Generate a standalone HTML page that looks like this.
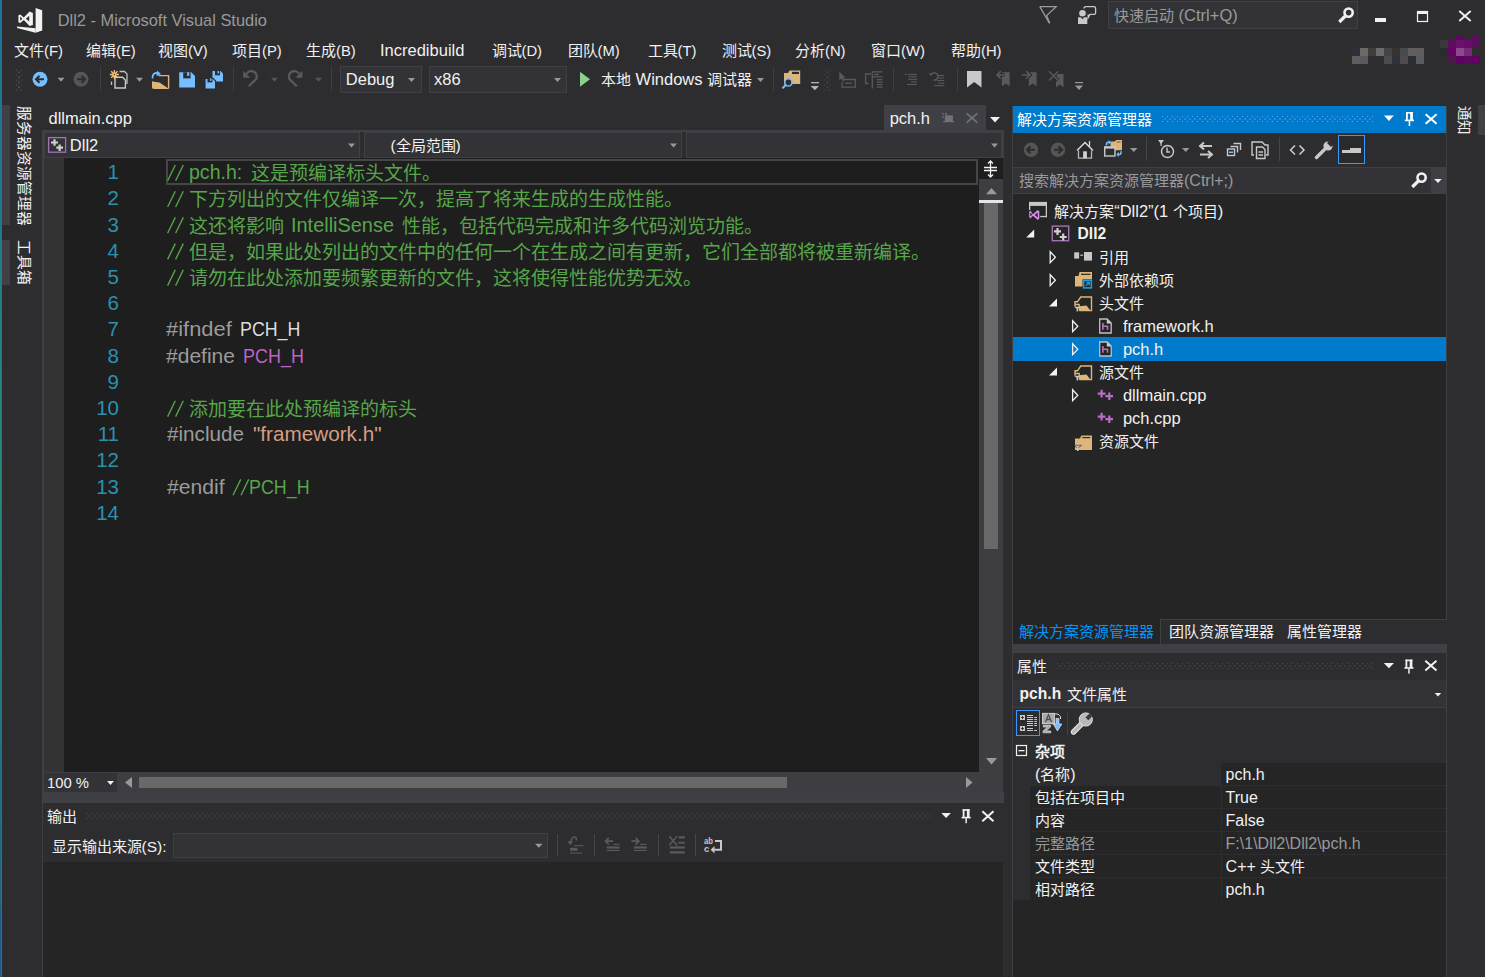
<!DOCTYPE html>
<html lang="zh-CN"><head><meta charset="utf-8"><title>Dll2 - Microsoft Visual Studio</title>
<style>
html,body{margin:0;padding:0;width:1485px;height:977px;overflow:hidden;background:#2d2d30;}
body{position:relative;font-family:"Liberation Sans",sans-serif;}
svg{position:absolute;left:0;top:0;}
.t{position:absolute;white-space:pre;line-height:0;}
.t span{line-height:0;}
</style></head><body>
<svg width="1485" height="977" viewBox="0 0 1485 977">
<defs><linearGradient id="desk" x1="0" y1="0" x2="0" y2="1"><stop offset="0" stop-color="#1f6f9a"/><stop offset="0.5" stop-color="#2a8a7a"/><stop offset="1" stop-color="#1a5a8a"/></linearGradient></defs>
<g shape-rendering="crispEdges">
<rect x="0" y="0" width="1485" height="977" fill="#2d2d30" />
<rect x="0" y="0" width="1" height="977" fill="url(#desk)"/>
<rect x="1" y="0" width="1" height="977" fill="#007acc" />
<rect x="1108" y="1" width="250" height="28" fill="#3f3f46" />
<rect x="1109" y="2" width="248" height="26" fill="#333337" />
<rect x="1375" y="18" width="11" height="4" fill="#f1f1f1" />
<rect x="1352" y="48" width="8" height="8" fill="#2d3038" />
<rect x="1360" y="48" width="8" height="8" fill="#6e6866" />
<rect x="1368" y="48" width="8" height="8" fill="#3f3e3e" />
<rect x="1376" y="48" width="8" height="8" fill="#6c6c6e" />
<rect x="1384" y="48" width="8" height="8" fill="#444343" />
<rect x="1392" y="48" width="8" height="8" fill="#383434" />
<rect x="1400" y="48" width="8" height="8" fill="#4a4b4f" />
<rect x="1408" y="48" width="8" height="8" fill="#625e5f" />
<rect x="1416" y="48" width="8" height="8" fill="#5f5e5c" />
<rect x="1352" y="56" width="8" height="8" fill="#5e5e60" />
<rect x="1360" y="56" width="8" height="8" fill="#5a5a5c" />
<rect x="1384" y="56" width="8" height="8" fill="#4b4c50" />
<rect x="1392" y="56" width="8" height="8" fill="#2e3138" />
<rect x="1400" y="56" width="8" height="8" fill="#4d4d4f" />
<rect x="1416" y="56" width="8" height="8" fill="#595c61" />
<rect x="1432" y="48" width="8" height="8" fill="#2e2e2e" />
<rect x="1440" y="48" width="8" height="8" fill="#2b2b2d" />
<rect x="1440" y="40" width="8" height="8" fill="#383838" />
<rect x="1448" y="40" width="8" height="8" fill="#5c0c5c" />
<rect x="1456" y="40" width="8" height="8" fill="#6a1070" />
<rect x="1464" y="40" width="8" height="8" fill="#680a68" />
<rect x="1472" y="40" width="8" height="8" fill="#58105a" />
<rect x="1448" y="48" width="8" height="8" fill="#660066" />
<rect x="1456" y="48" width="8" height="8" fill="#8c4a8c" />
<rect x="1464" y="48" width="8" height="8" fill="#7a2a7a" />
<rect x="1448" y="56" width="8" height="8" fill="#4a1a4a" />
<rect x="1456" y="56" width="8" height="8" fill="#600060" />
<rect x="1464" y="56" width="8" height="8" fill="#5a0a5a" />
<rect x="1472" y="56" width="8" height="8" fill="#640064" />
<rect x="1456" y="35" width="8" height="5" fill="#5a0a5a" />
<rect x="1472" y="35" width="8" height="5" fill="#5c0c5c" />
<rect x="100" y="67" width="1" height="24" fill="#3f3f46" />
<rect x="233" y="67" width="1" height="24" fill="#3f3f46" />
<rect x="331" y="67" width="1" height="24" fill="#3f3f46" />
<rect x="340" y="66" width="82" height="27" fill="#3f3f46" />
<rect x="341" y="67" width="80" height="25" fill="#333337" />
<rect x="429" y="66" width="138" height="27" fill="#3f3f46" />
<rect x="430" y="67" width="136" height="25" fill="#333337" />
<rect x="773" y="67" width="1" height="24" fill="#3f3f46" />
<rect x="893" y="67" width="1" height="24" fill="#3f3f46" />
<rect x="957" y="67" width="1" height="24" fill="#3f3f46" />
<rect x="2" y="105" width="8" height="120" fill="#3f3f46" />
<rect x="2" y="240" width="8" height="45" fill="#3f3f46" />
<rect x="884" y="105" width="102" height="25" fill="#3f3f46" />
<rect x="42" y="130" width="962" height="2" fill="#3f3f46" />
<rect x="42" y="130" width="2" height="673" fill="#3f3f46" />
<rect x="1002" y="130" width="2" height="28" fill="#3f3f46" />
<rect x="44" y="132" width="316" height="26" fill="#3f3f46" />
<rect x="45" y="133" width="314" height="24" fill="#333337" />
<rect x="364" y="132" width="318" height="26" fill="#3f3f46" />
<rect x="365" y="133" width="316" height="24" fill="#333337" />
<rect x="686" y="132" width="316" height="26" fill="#3f3f46" />
<rect x="687" y="133" width="314" height="24" fill="#333337" />
<rect x="44" y="158" width="20" height="614" fill="#333333" />
<rect x="64" y="158" width="915" height="614" fill="#1e1e1e" />
<rect x="167" y="160" width="810" height="24" fill="none" stroke="#464646" stroke-width="2"/>
<rect x="979" y="158" width="24" height="21" fill="#1e1e1e" />
<rect x="979" y="179" width="24" height="593" fill="#3e3e42" />
<rect x="979" y="200" width="24" height="3" fill="#e6e6e6" />
<rect x="984" y="203" width="14" height="346" fill="#686868" />
<rect x="44" y="772" width="959" height="20" fill="#3e3e42" />
<rect x="44" y="773" width="73" height="19" fill="#333337" />
<rect x="139" y="777" width="648" height="11" fill="#686868" />
<rect x="42" y="792" width="962" height="11" fill="#3f3f46" />
<rect x="43" y="803" width="960" height="59" fill="#2d2d30" />
<rect x="43" y="862" width="960" height="115" fill="#252526" />
<rect x="173" y="833" width="375" height="25" fill="#3f3f46" />
<rect x="174" y="834" width="373" height="23" fill="#333337" />
<rect x="557" y="834" width="1" height="22" fill="#46464a" />
<rect x="594" y="834" width="1" height="22" fill="#46464a" />
<rect x="658" y="834" width="1" height="22" fill="#46464a" />
<rect x="695" y="834" width="1" height="22" fill="#46464a" />
<rect x="1012" y="106" width="1" height="513" fill="#3f3f46" />
<rect x="1446" y="106" width="1" height="514" fill="#3f3f46" />
<rect x="1013" y="106" width="433" height="27" fill="#007acc" />
<rect x="1013" y="133" width="433" height="34" fill="#2d2d30" />
<rect x="1146" y="137" width="1" height="24" fill="#46464a" />
<rect x="1279" y="137" width="1" height="24" fill="#46464a" />
<rect x="1338.5" y="135.5" width="26" height="28" fill="#2a2a2d" stroke="#3399ff" stroke-width="1"/>
<rect x="1342" y="150" width="18" height="2.5" fill="#c8c8c8" />
<rect x="1350" y="147.5" width="10.5" height="5.3" fill="#c8c8c8" />
<rect x="1013" y="167" width="433" height="26" fill="#333337" />
<rect x="1013" y="167" width="433" height="1" fill="#3f3f46" />
<rect x="1013" y="193" width="433" height="1" fill="#3f3f46" />
<rect x="1431" y="167" width="15" height="26" fill="#3f3f46" />
<rect x="1013" y="194" width="433" height="425" fill="#252526" />
<rect x="1013" y="337" width="433" height="24" fill="#007acc" />
<rect x="1013" y="619" width="147" height="25" fill="#252526" />
<rect x="1160" y="619" width="287" height="1" fill="#3f3f46" />
<rect x="1160" y="619" width="1" height="25" fill="#3f3f46" />
<rect x="1012" y="644" width="435" height="9" fill="#3f3f46" />
<rect x="1012" y="619" width="1" height="25" fill="#3f3f46" />
<rect x="42" y="803" width="1" height="174" fill="#3f3f46" />
<rect x="1012" y="653" width="1" height="324" fill="#3f3f46" />
<rect x="1446" y="653" width="1" height="324" fill="#3f3f46" />
<rect x="1013" y="680" width="433" height="28" fill="#333337" />
<rect x="1013" y="707" width="433" height="1" fill="#3f3f46" />
<rect x="1016.5" y="710.5" width="23" height="25" fill="#2d2d30" stroke="#3399ff" stroke-width="1.2"/>
<rect x="1067" y="712" width="1" height="23" fill="#3f3f46" />
<rect x="1221" y="763" width="225" height="22" fill="#252526" />
<rect x="1030" y="786" width="191" height="22" fill="#252526" />
<rect x="1222" y="786" width="224" height="22" fill="#252526" />
<rect x="1030" y="809" width="191" height="22" fill="#252526" />
<rect x="1222" y="809" width="224" height="22" fill="#252526" />
<rect x="1030" y="832" width="191" height="22" fill="#252526" />
<rect x="1222" y="832" width="224" height="22" fill="#252526" />
<rect x="1030" y="855" width="191" height="22" fill="#252526" />
<rect x="1222" y="855" width="224" height="22" fill="#252526" />
<rect x="1030" y="878" width="191" height="22" fill="#252526" />
<rect x="1222" y="878" width="224" height="22" fill="#252526" />
<rect x="1013" y="900" width="433" height="77" fill="#252526" />
<rect x="1478" y="105" width="7" height="30" fill="#3f3f46" />
</g>
<g transform="translate(14,4)" fill="#f1f1f1"><path d="M21.6 3.9 L28.2 6.2 L28.2 26.5 L21.6 28.8 Z"/><path d="M3 22.4 L21.6 24.2 L21.6 28.8 L3 24 Z"/><path fill-rule="evenodd" d="M4.4 11.2 L6.2 10.6 L9.8 13.6 L15.6 7.6 L18.9 8.9 L18.9 20.9 L15.6 22 L9.8 16 L6.2 18.9 L4.4 18.3 Z M6.2 12.6 L6.2 16.8 L8.4 14.7 Z M15.2 11.8 L15.2 17.6 L11.9 14.8 Z"/></g>
<g fill="none" stroke="#9a9a9a" stroke-width="1.3"><path d="M1039.8 6.6 L1056.2 6.6 L1046.6 15.6 L1049.8 23.3"/><path d="M1039.8 6.6 L1049.4 23.3" /></g>
<g fill="#c8c8c8"><circle cx="1082.5" cy="13.2" r="3.3"/><path d="M1078 24 L1078 17.2 L1080.8 17.2 L1082.5 19.2 L1084.2 17.2 L1087.3 17.2 L1087.3 24 Z"/></g><path d="M1084 8.5 Q1084 6.7 1086 6.7 L1094 6.7 Q1095.6 6.7 1095.6 8.5 L1095.6 12.8 Q1095.6 14.4 1094 14.4 L1090 14.4 L1088.2 17.5 L1088.2 14.4" fill="none" stroke="#c8c8c8" stroke-width="1.3"/>
<g stroke="#f1f1f1" fill="none"><circle cx="1348.6" cy="12.6" r="4.1" stroke-width="2.6"/><path d="M1345.3 16 L1339.3 22" stroke-width="3.2"/></g>
<rect x="1417.5" y="11.5" width="10" height="10" fill="none" stroke="#f1f1f1" stroke-width="1.2"/><rect x="1417" y="11" width="11" height="3" fill="#f1f1f1"/>
<path d="M1459.3 11 L1470.7 21 M1470.7 11 L1459.3 21" stroke="#f1f1f1" stroke-width="1.9"/>
<rect x="16" y="69.5" width="1.2" height="1.2" fill="#505054"/><rect x="21" y="69.5" width="1.2" height="1.2" fill="#505054"/><rect x="18.2" y="71.5" width="1.8" height="1.8" fill="#505054"/><rect x="16" y="74.5" width="1.2" height="1.2" fill="#505054"/><rect x="21" y="74.5" width="1.2" height="1.2" fill="#505054"/><rect x="18.2" y="76.5" width="1.8" height="1.8" fill="#505054"/><rect x="16" y="79.5" width="1.2" height="1.2" fill="#505054"/><rect x="21" y="79.5" width="1.2" height="1.2" fill="#505054"/><rect x="18.2" y="81.5" width="1.8" height="1.8" fill="#505054"/><rect x="16" y="84.5" width="1.2" height="1.2" fill="#505054"/><rect x="21" y="84.5" width="1.2" height="1.2" fill="#505054"/><rect x="18.2" y="86.5" width="1.8" height="1.8" fill="#505054"/><rect x="16" y="89.5" width="1.2" height="1.2" fill="#505054"/><rect x="21" y="89.5" width="1.2" height="1.2" fill="#505054"/>
<circle cx="40" cy="79.2" r="7.5" fill="#75beff"/><path d="M36 79.2 L44 79.2 M39.5 75.7 L36 79.2 L39.5 82.7" stroke="#2d2d30" stroke-width="2" fill="none"/>
<path d="M57.5 77.7 L64.5 77.7 L61.0 81.7 Z" fill="#999999"/>
<circle cx="81" cy="79.2" r="7.5" fill="#555555"/><path d="M85 79.2 L77 79.2 M81.5 75.7 L85 79.2 L81.5 82.7" stroke="#2d2d30" stroke-width="2" fill="none"/>
<path d="M119.5 71.5 L124.5 71.5 L127 74 L127 84" fill="none" stroke="#c0c0c0" stroke-width="1.3"/><path d="M111.5 81.5 L111.5 85" fill="none" stroke="#c0c0c0" stroke-width="1.3"/><path d="M115 77.2 L122.5 77.2 L125.4 80.1 L125.4 88 L115 88 Z" fill="#2d2d30" stroke="#c8c8c8" stroke-width="1.4"/><g stroke="#f2c27e" stroke-width="1.3"><path d="M114.4 70 L114.4 79 M109.9 74.5 L118.9 74.5 M111.2 71.3 L117.6 77.7 M117.6 71.3 L111.2 77.7"/></g><circle cx="114.4" cy="74.5" r="1.6" fill="#f2c27e"/><circle cx="114.4" cy="74.5" r="0.7" fill="#2d2d30"/>
<path d="M136 77.7 L143 77.7 L139.5 81.7 Z" fill="#999999"/>
<path d="M158.5 75.6 L168.6 75.6 L168.6 88.4" fill="none" stroke="#dcb67a" stroke-width="1.4"/><path d="M152 81.5 L159.5 82.5 L169.2 89 L153.4 89 Z" fill="#dcb67a"/><path d="M152.6 81.5 L152.6 88.5" stroke="#dcb67a" stroke-width="1.2"/><path d="M152.5 78.5 C152 74 155 72.3 158.5 73.2" fill="none" stroke="#75beff" stroke-width="1.8"/><path d="M157 70.5 L161 74 L156.5 76" fill="#75beff"/>
<path d="M179.2 72.3 L191.3 72.3 L195 76 L195 87.6 L179.2 87.6 Z" fill="#75beff"/><rect x="183.2" y="72.3" width="7.4" height="6.1" fill="#2d2d30"/><rect x="187.1" y="72.3" width="2.2" height="3.5" fill="#75beff"/>
<path d="M212.5 71 L220.5 71 L223 73.5 L223 81.5 L212.5 81.5 Z" fill="#75beff"/><rect x="215" y="71" width="5" height="4.3" fill="#2d2d30"/><rect x="217.5" y="71" width="1.5" height="2.5" fill="#75beff"/><path d="M205 78.4 L213 78.4 L215.6 81 L215.6 89 L205 89 Z" fill="#75beff" stroke="#2d2d30" stroke-width="1.2"/><rect x="207.5" y="78.4" width="5" height="4" fill="#2d2d30"/><rect x="210" y="78.4" width="1.5" height="2.4" fill="#75beff"/>
<path d="M248.8 86.3 L256 79.3 A5.2 5.2 0 0 0 246.5 73.8" fill="none" stroke="#5a5a5a" stroke-width="2.3"/><path d="M243.2 70.8 L243.2 77.8 L250.2 77.8 Z" fill="#5a5a5a"/>
<path d="M271 77.7 L278 77.7 L274.5 81.7 Z" fill="#555555"/>
<path d="M296.8 86.3 L289.6 79.3 A5.2 5.2 0 0 1 299.1 73.8" fill="none" stroke="#5a5a5a" stroke-width="2.3"/><path d="M302.4 70.8 L302.4 77.8 L295.4 77.8 Z" fill="#5a5a5a"/>
<path d="M315 77.7 L322 77.7 L318.5 81.7 Z" fill="#555555"/>
<path d="M408 78 L415 78 L411.5 82 Z" fill="#999999"/>
<path d="M554 78 L561 78 L557.5 82 Z" fill="#999999"/>
<path d="M580 71.7 L590 79.2 L580 86.7 Z" fill="#8ad28a"/>
<path d="M757 78 L764 78 L760.5 82 Z" fill="#999999"/>
<path d="M784 73 L788 73 L789.5 70.6 L800.2 70.6 L800.2 84.1 L784 84.1 Z" fill="#dcb67a"/><rect x="792" y="71.8" width="7" height="2.2" fill="#2d2d30"/><circle cx="788.4" cy="82.4" r="3.6" fill="#2d2d30" stroke="#75beff" stroke-width="1.6"/><path d="M785.8 85 L783 87.8" stroke="#75beff" stroke-width="2" stroke-linecap="round"/>
<rect x="811" y="82" width="8" height="1.3" fill="#b4b4b4"/><path d="M810.7 86 L819 86 L814.85 90.3 Z" fill="#b4b4b4"/>
<rect x="824.2" y="69.5" width="1.2" height="1.2" fill="#46464a"/><rect x="829.2" y="69.5" width="1.2" height="1.2" fill="#46464a"/><rect x="826.4000000000001" y="71.5" width="1.8" height="1.8" fill="#46464a"/><rect x="824.2" y="74.5" width="1.2" height="1.2" fill="#46464a"/><rect x="829.2" y="74.5" width="1.2" height="1.2" fill="#46464a"/><rect x="826.4000000000001" y="76.5" width="1.8" height="1.8" fill="#46464a"/><rect x="824.2" y="79.5" width="1.2" height="1.2" fill="#46464a"/><rect x="829.2" y="79.5" width="1.2" height="1.2" fill="#46464a"/><rect x="826.4000000000001" y="81.5" width="1.8" height="1.8" fill="#46464a"/><rect x="824.2" y="84.5" width="1.2" height="1.2" fill="#46464a"/><rect x="829.2" y="84.5" width="1.2" height="1.2" fill="#46464a"/><rect x="826.4000000000001" y="86.5" width="1.8" height="1.8" fill="#46464a"/><rect x="824.2" y="89.5" width="1.2" height="1.2" fill="#46464a"/><rect x="829.2" y="89.5" width="1.2" height="1.2" fill="#46464a"/>
<path d="M839.3 71.4 L839.3 80.6 L841.5 78.6 L843.3 82 L844.5 81.3 L842.8 78 L845.5 78 Z" fill="#595959"/><g fill="none" stroke="#595959" stroke-width="1.3"><path d="M842.5 79.5 L855.3 79.5 L855.3 87.2 L842 87.2 L842 82"/><path d="M845 83.3 L852 83.3"/></g>
<g fill="none" stroke="#595959" stroke-width="1.3"><path d="M868.5 74 L865.6 74 L865.6 83.5 L868.5 83.5 M868 74 L871 74"/><path d="M872.3 71.5 L872.3 88.5 M872.3 71.8 L882.5 71.8 M874.2 74.5 L879 74.5 M872.3 76.8 L882.5 76.8 M876.8 79.6 L882.5 79.6 M876.8 82.1 L882.5 82.1 M876.8 84.6 L882.5 84.6 M876.8 87.1 L882.5 87.1"/></g>
<g fill="#595959"><rect x="904.8" y="73.9" width="2" height="1.1"/><rect x="908.3" y="73.9" width="8.7" height="1.1"/><rect x="908.3" y="76.3" width="8.7" height="1.1"/><rect x="908.3" y="78.8" width="8.7" height="1.1"/><rect x="911.1" y="81.3" width="5.9" height="1.1"/><rect x="907" y="83.9" width="10" height="1.1"/></g>
<path d="M931 75 A3.6 3.6 0 1 1 933.5 80" fill="none" stroke="#595959" stroke-width="1.3"/><path d="M929 73.5 L932.5 73 L931 76.5 Z" fill="#595959"/><g fill="#595959"><rect x="938" y="75" width="6.2" height="1.1"/><rect x="938" y="77.5" width="6.2" height="1.1"/><rect x="937" y="80" width="7.2" height="1.1"/><rect x="938" y="82.6" width="6.2" height="1.1"/><rect x="934.1" y="85.1" width="10.1" height="1.1"/></g>
<path d="M967 71 L981.5 71 L981.5 87.5 L974.25 82 L967 87.5 Z" fill="#c8c8c8"/>
<path d="M1001.9 72.2 L1009.7 72.2 L1009.7 86.2 L1005.8 83.6 L1001.9 86.2 Z" fill="#595959"/><path d="M1004.5 74.9 L997 74.9 M1000.8 71.1 L997 74.9 L1000.8 78.7" stroke="#2d2d30" stroke-width="3.6" fill="none"/><path d="M1004.5 74.9 L997 74.9 M1000.8 71.1 L997 74.9 L1000.8 78.7" stroke="#595959" stroke-width="1.5" fill="none"/>
<path d="M1028.8 72.2 L1036.6 72.2 L1036.6 86.2 L1032.7 83.6 L1028.8 86.2 Z" fill="#595959"/><path d="M1021.5 74.9 L1030 74.9 M1026.2 71.1 L1030 74.9 L1026.2 78.7" stroke="#2d2d30" stroke-width="3.6" fill="none"/><path d="M1021.5 74.9 L1030 74.9 M1026.2 71.1 L1030 74.9 L1026.2 78.7" stroke="#595959" stroke-width="1.5" fill="none"/>
<path d="M1056 74.1 L1063.5 74.1 L1063.5 87.3 L1059.75 84.6 L1056 87.3 Z" fill="#595959"/><path d="M1049 71.3 L1058.2 80.5 M1058.2 71.3 L1049 80.5" stroke="#2d2d30" stroke-width="3.4" fill="none"/><path d="M1049 71.3 L1058.2 80.5 M1058.2 71.3 L1049 80.5" stroke="#595959" stroke-width="1.5" fill="none"/>
<rect x="1075" y="82" width="8" height="1.2" fill="#999"/><path d="M1075 85.5 L1083 85.5 L1079 90 Z" fill="#999"/>
<g fill="#737373"><rect x="944.9" y="115.4" width="8" height="5.8"/><rect x="943.1" y="121.1" width="11" height="1.1"/><rect x="945.2" y="113" width="1.8" height="1.8"/><rect x="942" y="116.3" width="1.8" height="1.4"/></g><path d="M942 112.9 L943.8 114.7" stroke="#737373" stroke-width="1.2"/>
<path d="M966.6 113.3 L977.4 122.7 M977.4 113.3 L966.6 122.7" stroke="#737373" stroke-width="1.7"/>
<path d="M990 117 L1000 117 L995 122.4 Z" fill="#f1f1f1"/>
<rect x="48.6" y="137.6" width="17" height="14.6" fill="none" stroke="#a472b4" stroke-width="1.3"/><path d="M51 142.5 L58 142.5 M54.5 139.2 L54.5 145.8 M56.3 147.7 L63 147.7 M59.65 144.4 L59.65 151" stroke="#d0d0d0" stroke-width="2.2"/>
<path d="M348 143.4 L355 143.4 L351.5 147.4 Z" fill="#999999"/>
<path d="M670 143.4 L677 143.4 L673.5 147.4 Z" fill="#999999"/>
<path d="M991 143.6 L998 143.6 L994.5 147.6 Z" fill="#999999"/>
<g fill="none" stroke="#f1f1f1" stroke-width="1.3"><path d="M984 167.5 L997 167.5 M984 170.5 L997 170.5 M990.5 161 L990.5 177 M988 163.5 L990.5 161 L993 163.5 M988 174.5 L990.5 177 L993 174.5"/></g>
<path d="M986 194.3 L997 194.3 L991.5 188 Z" fill="#999999"/>
<path d="M986 758 L997 758 L991.5 764.6 Z" fill="#999999"/>
<path d="M107 781 L114 781 L110.5 785 Z" fill="#f1f1f1"/>
<path d="M132 777 L132 788 L125 782.5 Z" fill="#999999"/>
<path d="M966 777 L966 788 L972.5 782.5 Z" fill="#999999"/>
<path d="M167.6 180.79999999999998 L175.3 165.0 M175.6 180.79999999999998 L183.3 165.0" stroke="#57a64a" stroke-width="1.35"/>
<path d="M167.6 206.99999999999997 L175.3 191.2 M175.6 206.99999999999997 L183.3 191.2" stroke="#57a64a" stroke-width="1.35"/>
<path d="M167.6 233.2 L175.3 217.4 M175.6 233.2 L183.3 217.4" stroke="#57a64a" stroke-width="1.35"/>
<path d="M167.6 259.4 L175.3 243.59999999999997 M175.6 259.4 L183.3 243.59999999999997" stroke="#57a64a" stroke-width="1.35"/>
<path d="M167.6 285.6 L175.3 269.8 M175.6 285.6 L183.3 269.8" stroke="#57a64a" stroke-width="1.35"/>
<path d="M167.6 416.6 L175.3 400.8 M175.6 416.6 L183.3 400.8" stroke="#57a64a" stroke-width="1.35"/>
<path d="M233.0 495.2 L240.70000000000002 479.4 M241.0 495.2 L248.70000000000002 479.4" stroke="#57a64a" stroke-width="1.35"/>
<rect x="87" y="813" width="1" height="1" fill="#4a4a4e"/><rect x="87" y="818" width="1" height="1" fill="#4a4a4e"/><rect x="89" y="815" width="2" height="2" fill="#3a3a3e"/><rect x="92" y="813" width="1" height="1" fill="#4a4a4e"/><rect x="92" y="818" width="1" height="1" fill="#4a4a4e"/><rect x="94" y="815" width="2" height="2" fill="#3a3a3e"/><rect x="97" y="813" width="1" height="1" fill="#4a4a4e"/><rect x="97" y="818" width="1" height="1" fill="#4a4a4e"/><rect x="99" y="815" width="2" height="2" fill="#3a3a3e"/><rect x="102" y="813" width="1" height="1" fill="#4a4a4e"/><rect x="102" y="818" width="1" height="1" fill="#4a4a4e"/><rect x="104" y="815" width="2" height="2" fill="#3a3a3e"/><rect x="107" y="813" width="1" height="1" fill="#4a4a4e"/><rect x="107" y="818" width="1" height="1" fill="#4a4a4e"/><rect x="109" y="815" width="2" height="2" fill="#3a3a3e"/><rect x="112" y="813" width="1" height="1" fill="#4a4a4e"/><rect x="112" y="818" width="1" height="1" fill="#4a4a4e"/><rect x="114" y="815" width="2" height="2" fill="#3a3a3e"/><rect x="117" y="813" width="1" height="1" fill="#4a4a4e"/><rect x="117" y="818" width="1" height="1" fill="#4a4a4e"/><rect x="119" y="815" width="2" height="2" fill="#3a3a3e"/><rect x="122" y="813" width="1" height="1" fill="#4a4a4e"/><rect x="122" y="818" width="1" height="1" fill="#4a4a4e"/><rect x="124" y="815" width="2" height="2" fill="#3a3a3e"/><rect x="127" y="813" width="1" height="1" fill="#4a4a4e"/><rect x="127" y="818" width="1" height="1" fill="#4a4a4e"/><rect x="129" y="815" width="2" height="2" fill="#3a3a3e"/><rect x="132" y="813" width="1" height="1" fill="#4a4a4e"/><rect x="132" y="818" width="1" height="1" fill="#4a4a4e"/><rect x="134" y="815" width="2" height="2" fill="#3a3a3e"/><rect x="137" y="813" width="1" height="1" fill="#4a4a4e"/><rect x="137" y="818" width="1" height="1" fill="#4a4a4e"/><rect x="139" y="815" width="2" height="2" fill="#3a3a3e"/><rect x="142" y="813" width="1" height="1" fill="#4a4a4e"/><rect x="142" y="818" width="1" height="1" fill="#4a4a4e"/><rect x="144" y="815" width="2" height="2" fill="#3a3a3e"/><rect x="147" y="813" width="1" height="1" fill="#4a4a4e"/><rect x="147" y="818" width="1" height="1" fill="#4a4a4e"/><rect x="149" y="815" width="2" height="2" fill="#3a3a3e"/><rect x="152" y="813" width="1" height="1" fill="#4a4a4e"/><rect x="152" y="818" width="1" height="1" fill="#4a4a4e"/><rect x="154" y="815" width="2" height="2" fill="#3a3a3e"/><rect x="157" y="813" width="1" height="1" fill="#4a4a4e"/><rect x="157" y="818" width="1" height="1" fill="#4a4a4e"/><rect x="159" y="815" width="2" height="2" fill="#3a3a3e"/><rect x="162" y="813" width="1" height="1" fill="#4a4a4e"/><rect x="162" y="818" width="1" height="1" fill="#4a4a4e"/><rect x="164" y="815" width="2" height="2" fill="#3a3a3e"/><rect x="167" y="813" width="1" height="1" fill="#4a4a4e"/><rect x="167" y="818" width="1" height="1" fill="#4a4a4e"/><rect x="169" y="815" width="2" height="2" fill="#3a3a3e"/><rect x="172" y="813" width="1" height="1" fill="#4a4a4e"/><rect x="172" y="818" width="1" height="1" fill="#4a4a4e"/><rect x="174" y="815" width="2" height="2" fill="#3a3a3e"/><rect x="177" y="813" width="1" height="1" fill="#4a4a4e"/><rect x="177" y="818" width="1" height="1" fill="#4a4a4e"/><rect x="179" y="815" width="2" height="2" fill="#3a3a3e"/><rect x="182" y="813" width="1" height="1" fill="#4a4a4e"/><rect x="182" y="818" width="1" height="1" fill="#4a4a4e"/><rect x="184" y="815" width="2" height="2" fill="#3a3a3e"/><rect x="187" y="813" width="1" height="1" fill="#4a4a4e"/><rect x="187" y="818" width="1" height="1" fill="#4a4a4e"/><rect x="189" y="815" width="2" height="2" fill="#3a3a3e"/><rect x="192" y="813" width="1" height="1" fill="#4a4a4e"/><rect x="192" y="818" width="1" height="1" fill="#4a4a4e"/><rect x="194" y="815" width="2" height="2" fill="#3a3a3e"/><rect x="197" y="813" width="1" height="1" fill="#4a4a4e"/><rect x="197" y="818" width="1" height="1" fill="#4a4a4e"/><rect x="199" y="815" width="2" height="2" fill="#3a3a3e"/><rect x="202" y="813" width="1" height="1" fill="#4a4a4e"/><rect x="202" y="818" width="1" height="1" fill="#4a4a4e"/><rect x="204" y="815" width="2" height="2" fill="#3a3a3e"/><rect x="207" y="813" width="1" height="1" fill="#4a4a4e"/><rect x="207" y="818" width="1" height="1" fill="#4a4a4e"/><rect x="209" y="815" width="2" height="2" fill="#3a3a3e"/><rect x="212" y="813" width="1" height="1" fill="#4a4a4e"/><rect x="212" y="818" width="1" height="1" fill="#4a4a4e"/><rect x="214" y="815" width="2" height="2" fill="#3a3a3e"/><rect x="217" y="813" width="1" height="1" fill="#4a4a4e"/><rect x="217" y="818" width="1" height="1" fill="#4a4a4e"/><rect x="219" y="815" width="2" height="2" fill="#3a3a3e"/><rect x="222" y="813" width="1" height="1" fill="#4a4a4e"/><rect x="222" y="818" width="1" height="1" fill="#4a4a4e"/><rect x="224" y="815" width="2" height="2" fill="#3a3a3e"/><rect x="227" y="813" width="1" height="1" fill="#4a4a4e"/><rect x="227" y="818" width="1" height="1" fill="#4a4a4e"/><rect x="229" y="815" width="2" height="2" fill="#3a3a3e"/><rect x="232" y="813" width="1" height="1" fill="#4a4a4e"/><rect x="232" y="818" width="1" height="1" fill="#4a4a4e"/><rect x="234" y="815" width="2" height="2" fill="#3a3a3e"/><rect x="237" y="813" width="1" height="1" fill="#4a4a4e"/><rect x="237" y="818" width="1" height="1" fill="#4a4a4e"/><rect x="239" y="815" width="2" height="2" fill="#3a3a3e"/><rect x="242" y="813" width="1" height="1" fill="#4a4a4e"/><rect x="242" y="818" width="1" height="1" fill="#4a4a4e"/><rect x="244" y="815" width="2" height="2" fill="#3a3a3e"/><rect x="247" y="813" width="1" height="1" fill="#4a4a4e"/><rect x="247" y="818" width="1" height="1" fill="#4a4a4e"/><rect x="249" y="815" width="2" height="2" fill="#3a3a3e"/><rect x="252" y="813" width="1" height="1" fill="#4a4a4e"/><rect x="252" y="818" width="1" height="1" fill="#4a4a4e"/><rect x="254" y="815" width="2" height="2" fill="#3a3a3e"/><rect x="257" y="813" width="1" height="1" fill="#4a4a4e"/><rect x="257" y="818" width="1" height="1" fill="#4a4a4e"/><rect x="259" y="815" width="2" height="2" fill="#3a3a3e"/><rect x="262" y="813" width="1" height="1" fill="#4a4a4e"/><rect x="262" y="818" width="1" height="1" fill="#4a4a4e"/><rect x="264" y="815" width="2" height="2" fill="#3a3a3e"/><rect x="267" y="813" width="1" height="1" fill="#4a4a4e"/><rect x="267" y="818" width="1" height="1" fill="#4a4a4e"/><rect x="269" y="815" width="2" height="2" fill="#3a3a3e"/><rect x="272" y="813" width="1" height="1" fill="#4a4a4e"/><rect x="272" y="818" width="1" height="1" fill="#4a4a4e"/><rect x="274" y="815" width="2" height="2" fill="#3a3a3e"/><rect x="277" y="813" width="1" height="1" fill="#4a4a4e"/><rect x="277" y="818" width="1" height="1" fill="#4a4a4e"/><rect x="279" y="815" width="2" height="2" fill="#3a3a3e"/><rect x="282" y="813" width="1" height="1" fill="#4a4a4e"/><rect x="282" y="818" width="1" height="1" fill="#4a4a4e"/><rect x="284" y="815" width="2" height="2" fill="#3a3a3e"/><rect x="287" y="813" width="1" height="1" fill="#4a4a4e"/><rect x="287" y="818" width="1" height="1" fill="#4a4a4e"/><rect x="289" y="815" width="2" height="2" fill="#3a3a3e"/><rect x="292" y="813" width="1" height="1" fill="#4a4a4e"/><rect x="292" y="818" width="1" height="1" fill="#4a4a4e"/><rect x="294" y="815" width="2" height="2" fill="#3a3a3e"/><rect x="297" y="813" width="1" height="1" fill="#4a4a4e"/><rect x="297" y="818" width="1" height="1" fill="#4a4a4e"/><rect x="299" y="815" width="2" height="2" fill="#3a3a3e"/><rect x="302" y="813" width="1" height="1" fill="#4a4a4e"/><rect x="302" y="818" width="1" height="1" fill="#4a4a4e"/><rect x="304" y="815" width="2" height="2" fill="#3a3a3e"/><rect x="307" y="813" width="1" height="1" fill="#4a4a4e"/><rect x="307" y="818" width="1" height="1" fill="#4a4a4e"/><rect x="309" y="815" width="2" height="2" fill="#3a3a3e"/><rect x="312" y="813" width="1" height="1" fill="#4a4a4e"/><rect x="312" y="818" width="1" height="1" fill="#4a4a4e"/><rect x="314" y="815" width="2" height="2" fill="#3a3a3e"/><rect x="317" y="813" width="1" height="1" fill="#4a4a4e"/><rect x="317" y="818" width="1" height="1" fill="#4a4a4e"/><rect x="319" y="815" width="2" height="2" fill="#3a3a3e"/><rect x="322" y="813" width="1" height="1" fill="#4a4a4e"/><rect x="322" y="818" width="1" height="1" fill="#4a4a4e"/><rect x="324" y="815" width="2" height="2" fill="#3a3a3e"/><rect x="327" y="813" width="1" height="1" fill="#4a4a4e"/><rect x="327" y="818" width="1" height="1" fill="#4a4a4e"/><rect x="329" y="815" width="2" height="2" fill="#3a3a3e"/><rect x="332" y="813" width="1" height="1" fill="#4a4a4e"/><rect x="332" y="818" width="1" height="1" fill="#4a4a4e"/><rect x="334" y="815" width="2" height="2" fill="#3a3a3e"/><rect x="337" y="813" width="1" height="1" fill="#4a4a4e"/><rect x="337" y="818" width="1" height="1" fill="#4a4a4e"/><rect x="339" y="815" width="2" height="2" fill="#3a3a3e"/><rect x="342" y="813" width="1" height="1" fill="#4a4a4e"/><rect x="342" y="818" width="1" height="1" fill="#4a4a4e"/><rect x="344" y="815" width="2" height="2" fill="#3a3a3e"/><rect x="347" y="813" width="1" height="1" fill="#4a4a4e"/><rect x="347" y="818" width="1" height="1" fill="#4a4a4e"/><rect x="349" y="815" width="2" height="2" fill="#3a3a3e"/><rect x="352" y="813" width="1" height="1" fill="#4a4a4e"/><rect x="352" y="818" width="1" height="1" fill="#4a4a4e"/><rect x="354" y="815" width="2" height="2" fill="#3a3a3e"/><rect x="357" y="813" width="1" height="1" fill="#4a4a4e"/><rect x="357" y="818" width="1" height="1" fill="#4a4a4e"/><rect x="359" y="815" width="2" height="2" fill="#3a3a3e"/><rect x="362" y="813" width="1" height="1" fill="#4a4a4e"/><rect x="362" y="818" width="1" height="1" fill="#4a4a4e"/><rect x="364" y="815" width="2" height="2" fill="#3a3a3e"/><rect x="367" y="813" width="1" height="1" fill="#4a4a4e"/><rect x="367" y="818" width="1" height="1" fill="#4a4a4e"/><rect x="369" y="815" width="2" height="2" fill="#3a3a3e"/><rect x="372" y="813" width="1" height="1" fill="#4a4a4e"/><rect x="372" y="818" width="1" height="1" fill="#4a4a4e"/><rect x="374" y="815" width="2" height="2" fill="#3a3a3e"/><rect x="377" y="813" width="1" height="1" fill="#4a4a4e"/><rect x="377" y="818" width="1" height="1" fill="#4a4a4e"/><rect x="379" y="815" width="2" height="2" fill="#3a3a3e"/><rect x="382" y="813" width="1" height="1" fill="#4a4a4e"/><rect x="382" y="818" width="1" height="1" fill="#4a4a4e"/><rect x="384" y="815" width="2" height="2" fill="#3a3a3e"/><rect x="387" y="813" width="1" height="1" fill="#4a4a4e"/><rect x="387" y="818" width="1" height="1" fill="#4a4a4e"/><rect x="389" y="815" width="2" height="2" fill="#3a3a3e"/><rect x="392" y="813" width="1" height="1" fill="#4a4a4e"/><rect x="392" y="818" width="1" height="1" fill="#4a4a4e"/><rect x="394" y="815" width="2" height="2" fill="#3a3a3e"/><rect x="397" y="813" width="1" height="1" fill="#4a4a4e"/><rect x="397" y="818" width="1" height="1" fill="#4a4a4e"/><rect x="399" y="815" width="2" height="2" fill="#3a3a3e"/><rect x="402" y="813" width="1" height="1" fill="#4a4a4e"/><rect x="402" y="818" width="1" height="1" fill="#4a4a4e"/><rect x="404" y="815" width="2" height="2" fill="#3a3a3e"/><rect x="407" y="813" width="1" height="1" fill="#4a4a4e"/><rect x="407" y="818" width="1" height="1" fill="#4a4a4e"/><rect x="409" y="815" width="2" height="2" fill="#3a3a3e"/><rect x="412" y="813" width="1" height="1" fill="#4a4a4e"/><rect x="412" y="818" width="1" height="1" fill="#4a4a4e"/><rect x="414" y="815" width="2" height="2" fill="#3a3a3e"/><rect x="417" y="813" width="1" height="1" fill="#4a4a4e"/><rect x="417" y="818" width="1" height="1" fill="#4a4a4e"/><rect x="419" y="815" width="2" height="2" fill="#3a3a3e"/><rect x="422" y="813" width="1" height="1" fill="#4a4a4e"/><rect x="422" y="818" width="1" height="1" fill="#4a4a4e"/><rect x="424" y="815" width="2" height="2" fill="#3a3a3e"/><rect x="427" y="813" width="1" height="1" fill="#4a4a4e"/><rect x="427" y="818" width="1" height="1" fill="#4a4a4e"/><rect x="429" y="815" width="2" height="2" fill="#3a3a3e"/><rect x="432" y="813" width="1" height="1" fill="#4a4a4e"/><rect x="432" y="818" width="1" height="1" fill="#4a4a4e"/><rect x="434" y="815" width="2" height="2" fill="#3a3a3e"/><rect x="437" y="813" width="1" height="1" fill="#4a4a4e"/><rect x="437" y="818" width="1" height="1" fill="#4a4a4e"/><rect x="439" y="815" width="2" height="2" fill="#3a3a3e"/><rect x="442" y="813" width="1" height="1" fill="#4a4a4e"/><rect x="442" y="818" width="1" height="1" fill="#4a4a4e"/><rect x="444" y="815" width="2" height="2" fill="#3a3a3e"/><rect x="447" y="813" width="1" height="1" fill="#4a4a4e"/><rect x="447" y="818" width="1" height="1" fill="#4a4a4e"/><rect x="449" y="815" width="2" height="2" fill="#3a3a3e"/><rect x="452" y="813" width="1" height="1" fill="#4a4a4e"/><rect x="452" y="818" width="1" height="1" fill="#4a4a4e"/><rect x="454" y="815" width="2" height="2" fill="#3a3a3e"/><rect x="457" y="813" width="1" height="1" fill="#4a4a4e"/><rect x="457" y="818" width="1" height="1" fill="#4a4a4e"/><rect x="459" y="815" width="2" height="2" fill="#3a3a3e"/><rect x="462" y="813" width="1" height="1" fill="#4a4a4e"/><rect x="462" y="818" width="1" height="1" fill="#4a4a4e"/><rect x="464" y="815" width="2" height="2" fill="#3a3a3e"/><rect x="467" y="813" width="1" height="1" fill="#4a4a4e"/><rect x="467" y="818" width="1" height="1" fill="#4a4a4e"/><rect x="469" y="815" width="2" height="2" fill="#3a3a3e"/><rect x="472" y="813" width="1" height="1" fill="#4a4a4e"/><rect x="472" y="818" width="1" height="1" fill="#4a4a4e"/><rect x="474" y="815" width="2" height="2" fill="#3a3a3e"/><rect x="477" y="813" width="1" height="1" fill="#4a4a4e"/><rect x="477" y="818" width="1" height="1" fill="#4a4a4e"/><rect x="479" y="815" width="2" height="2" fill="#3a3a3e"/><rect x="482" y="813" width="1" height="1" fill="#4a4a4e"/><rect x="482" y="818" width="1" height="1" fill="#4a4a4e"/><rect x="484" y="815" width="2" height="2" fill="#3a3a3e"/><rect x="487" y="813" width="1" height="1" fill="#4a4a4e"/><rect x="487" y="818" width="1" height="1" fill="#4a4a4e"/><rect x="489" y="815" width="2" height="2" fill="#3a3a3e"/><rect x="492" y="813" width="1" height="1" fill="#4a4a4e"/><rect x="492" y="818" width="1" height="1" fill="#4a4a4e"/><rect x="494" y="815" width="2" height="2" fill="#3a3a3e"/><rect x="497" y="813" width="1" height="1" fill="#4a4a4e"/><rect x="497" y="818" width="1" height="1" fill="#4a4a4e"/><rect x="499" y="815" width="2" height="2" fill="#3a3a3e"/><rect x="502" y="813" width="1" height="1" fill="#4a4a4e"/><rect x="502" y="818" width="1" height="1" fill="#4a4a4e"/><rect x="504" y="815" width="2" height="2" fill="#3a3a3e"/><rect x="507" y="813" width="1" height="1" fill="#4a4a4e"/><rect x="507" y="818" width="1" height="1" fill="#4a4a4e"/><rect x="509" y="815" width="2" height="2" fill="#3a3a3e"/><rect x="512" y="813" width="1" height="1" fill="#4a4a4e"/><rect x="512" y="818" width="1" height="1" fill="#4a4a4e"/><rect x="514" y="815" width="2" height="2" fill="#3a3a3e"/><rect x="517" y="813" width="1" height="1" fill="#4a4a4e"/><rect x="517" y="818" width="1" height="1" fill="#4a4a4e"/><rect x="519" y="815" width="2" height="2" fill="#3a3a3e"/><rect x="522" y="813" width="1" height="1" fill="#4a4a4e"/><rect x="522" y="818" width="1" height="1" fill="#4a4a4e"/><rect x="524" y="815" width="2" height="2" fill="#3a3a3e"/><rect x="527" y="813" width="1" height="1" fill="#4a4a4e"/><rect x="527" y="818" width="1" height="1" fill="#4a4a4e"/><rect x="529" y="815" width="2" height="2" fill="#3a3a3e"/><rect x="532" y="813" width="1" height="1" fill="#4a4a4e"/><rect x="532" y="818" width="1" height="1" fill="#4a4a4e"/><rect x="534" y="815" width="2" height="2" fill="#3a3a3e"/><rect x="537" y="813" width="1" height="1" fill="#4a4a4e"/><rect x="537" y="818" width="1" height="1" fill="#4a4a4e"/><rect x="539" y="815" width="2" height="2" fill="#3a3a3e"/><rect x="542" y="813" width="1" height="1" fill="#4a4a4e"/><rect x="542" y="818" width="1" height="1" fill="#4a4a4e"/><rect x="544" y="815" width="2" height="2" fill="#3a3a3e"/><rect x="547" y="813" width="1" height="1" fill="#4a4a4e"/><rect x="547" y="818" width="1" height="1" fill="#4a4a4e"/><rect x="549" y="815" width="2" height="2" fill="#3a3a3e"/><rect x="552" y="813" width="1" height="1" fill="#4a4a4e"/><rect x="552" y="818" width="1" height="1" fill="#4a4a4e"/><rect x="554" y="815" width="2" height="2" fill="#3a3a3e"/><rect x="557" y="813" width="1" height="1" fill="#4a4a4e"/><rect x="557" y="818" width="1" height="1" fill="#4a4a4e"/><rect x="559" y="815" width="2" height="2" fill="#3a3a3e"/><rect x="562" y="813" width="1" height="1" fill="#4a4a4e"/><rect x="562" y="818" width="1" height="1" fill="#4a4a4e"/><rect x="564" y="815" width="2" height="2" fill="#3a3a3e"/><rect x="567" y="813" width="1" height="1" fill="#4a4a4e"/><rect x="567" y="818" width="1" height="1" fill="#4a4a4e"/><rect x="569" y="815" width="2" height="2" fill="#3a3a3e"/><rect x="572" y="813" width="1" height="1" fill="#4a4a4e"/><rect x="572" y="818" width="1" height="1" fill="#4a4a4e"/><rect x="574" y="815" width="2" height="2" fill="#3a3a3e"/><rect x="577" y="813" width="1" height="1" fill="#4a4a4e"/><rect x="577" y="818" width="1" height="1" fill="#4a4a4e"/><rect x="579" y="815" width="2" height="2" fill="#3a3a3e"/><rect x="582" y="813" width="1" height="1" fill="#4a4a4e"/><rect x="582" y="818" width="1" height="1" fill="#4a4a4e"/><rect x="584" y="815" width="2" height="2" fill="#3a3a3e"/><rect x="587" y="813" width="1" height="1" fill="#4a4a4e"/><rect x="587" y="818" width="1" height="1" fill="#4a4a4e"/><rect x="589" y="815" width="2" height="2" fill="#3a3a3e"/><rect x="592" y="813" width="1" height="1" fill="#4a4a4e"/><rect x="592" y="818" width="1" height="1" fill="#4a4a4e"/><rect x="594" y="815" width="2" height="2" fill="#3a3a3e"/><rect x="597" y="813" width="1" height="1" fill="#4a4a4e"/><rect x="597" y="818" width="1" height="1" fill="#4a4a4e"/><rect x="599" y="815" width="2" height="2" fill="#3a3a3e"/><rect x="602" y="813" width="1" height="1" fill="#4a4a4e"/><rect x="602" y="818" width="1" height="1" fill="#4a4a4e"/><rect x="604" y="815" width="2" height="2" fill="#3a3a3e"/><rect x="607" y="813" width="1" height="1" fill="#4a4a4e"/><rect x="607" y="818" width="1" height="1" fill="#4a4a4e"/><rect x="609" y="815" width="2" height="2" fill="#3a3a3e"/><rect x="612" y="813" width="1" height="1" fill="#4a4a4e"/><rect x="612" y="818" width="1" height="1" fill="#4a4a4e"/><rect x="614" y="815" width="2" height="2" fill="#3a3a3e"/><rect x="617" y="813" width="1" height="1" fill="#4a4a4e"/><rect x="617" y="818" width="1" height="1" fill="#4a4a4e"/><rect x="619" y="815" width="2" height="2" fill="#3a3a3e"/><rect x="622" y="813" width="1" height="1" fill="#4a4a4e"/><rect x="622" y="818" width="1" height="1" fill="#4a4a4e"/><rect x="624" y="815" width="2" height="2" fill="#3a3a3e"/><rect x="627" y="813" width="1" height="1" fill="#4a4a4e"/><rect x="627" y="818" width="1" height="1" fill="#4a4a4e"/><rect x="629" y="815" width="2" height="2" fill="#3a3a3e"/><rect x="632" y="813" width="1" height="1" fill="#4a4a4e"/><rect x="632" y="818" width="1" height="1" fill="#4a4a4e"/><rect x="634" y="815" width="2" height="2" fill="#3a3a3e"/><rect x="637" y="813" width="1" height="1" fill="#4a4a4e"/><rect x="637" y="818" width="1" height="1" fill="#4a4a4e"/><rect x="639" y="815" width="2" height="2" fill="#3a3a3e"/><rect x="642" y="813" width="1" height="1" fill="#4a4a4e"/><rect x="642" y="818" width="1" height="1" fill="#4a4a4e"/><rect x="644" y="815" width="2" height="2" fill="#3a3a3e"/><rect x="647" y="813" width="1" height="1" fill="#4a4a4e"/><rect x="647" y="818" width="1" height="1" fill="#4a4a4e"/><rect x="649" y="815" width="2" height="2" fill="#3a3a3e"/><rect x="652" y="813" width="1" height="1" fill="#4a4a4e"/><rect x="652" y="818" width="1" height="1" fill="#4a4a4e"/><rect x="654" y="815" width="2" height="2" fill="#3a3a3e"/><rect x="657" y="813" width="1" height="1" fill="#4a4a4e"/><rect x="657" y="818" width="1" height="1" fill="#4a4a4e"/><rect x="659" y="815" width="2" height="2" fill="#3a3a3e"/><rect x="662" y="813" width="1" height="1" fill="#4a4a4e"/><rect x="662" y="818" width="1" height="1" fill="#4a4a4e"/><rect x="664" y="815" width="2" height="2" fill="#3a3a3e"/><rect x="667" y="813" width="1" height="1" fill="#4a4a4e"/><rect x="667" y="818" width="1" height="1" fill="#4a4a4e"/><rect x="669" y="815" width="2" height="2" fill="#3a3a3e"/><rect x="672" y="813" width="1" height="1" fill="#4a4a4e"/><rect x="672" y="818" width="1" height="1" fill="#4a4a4e"/><rect x="674" y="815" width="2" height="2" fill="#3a3a3e"/><rect x="677" y="813" width="1" height="1" fill="#4a4a4e"/><rect x="677" y="818" width="1" height="1" fill="#4a4a4e"/><rect x="679" y="815" width="2" height="2" fill="#3a3a3e"/><rect x="682" y="813" width="1" height="1" fill="#4a4a4e"/><rect x="682" y="818" width="1" height="1" fill="#4a4a4e"/><rect x="684" y="815" width="2" height="2" fill="#3a3a3e"/><rect x="687" y="813" width="1" height="1" fill="#4a4a4e"/><rect x="687" y="818" width="1" height="1" fill="#4a4a4e"/><rect x="689" y="815" width="2" height="2" fill="#3a3a3e"/><rect x="692" y="813" width="1" height="1" fill="#4a4a4e"/><rect x="692" y="818" width="1" height="1" fill="#4a4a4e"/><rect x="694" y="815" width="2" height="2" fill="#3a3a3e"/><rect x="697" y="813" width="1" height="1" fill="#4a4a4e"/><rect x="697" y="818" width="1" height="1" fill="#4a4a4e"/><rect x="699" y="815" width="2" height="2" fill="#3a3a3e"/><rect x="702" y="813" width="1" height="1" fill="#4a4a4e"/><rect x="702" y="818" width="1" height="1" fill="#4a4a4e"/><rect x="704" y="815" width="2" height="2" fill="#3a3a3e"/><rect x="707" y="813" width="1" height="1" fill="#4a4a4e"/><rect x="707" y="818" width="1" height="1" fill="#4a4a4e"/><rect x="709" y="815" width="2" height="2" fill="#3a3a3e"/><rect x="712" y="813" width="1" height="1" fill="#4a4a4e"/><rect x="712" y="818" width="1" height="1" fill="#4a4a4e"/><rect x="714" y="815" width="2" height="2" fill="#3a3a3e"/><rect x="717" y="813" width="1" height="1" fill="#4a4a4e"/><rect x="717" y="818" width="1" height="1" fill="#4a4a4e"/><rect x="719" y="815" width="2" height="2" fill="#3a3a3e"/><rect x="722" y="813" width="1" height="1" fill="#4a4a4e"/><rect x="722" y="818" width="1" height="1" fill="#4a4a4e"/><rect x="724" y="815" width="2" height="2" fill="#3a3a3e"/><rect x="727" y="813" width="1" height="1" fill="#4a4a4e"/><rect x="727" y="818" width="1" height="1" fill="#4a4a4e"/><rect x="729" y="815" width="2" height="2" fill="#3a3a3e"/><rect x="732" y="813" width="1" height="1" fill="#4a4a4e"/><rect x="732" y="818" width="1" height="1" fill="#4a4a4e"/><rect x="734" y="815" width="2" height="2" fill="#3a3a3e"/><rect x="737" y="813" width="1" height="1" fill="#4a4a4e"/><rect x="737" y="818" width="1" height="1" fill="#4a4a4e"/><rect x="739" y="815" width="2" height="2" fill="#3a3a3e"/><rect x="742" y="813" width="1" height="1" fill="#4a4a4e"/><rect x="742" y="818" width="1" height="1" fill="#4a4a4e"/><rect x="744" y="815" width="2" height="2" fill="#3a3a3e"/><rect x="747" y="813" width="1" height="1" fill="#4a4a4e"/><rect x="747" y="818" width="1" height="1" fill="#4a4a4e"/><rect x="749" y="815" width="2" height="2" fill="#3a3a3e"/><rect x="752" y="813" width="1" height="1" fill="#4a4a4e"/><rect x="752" y="818" width="1" height="1" fill="#4a4a4e"/><rect x="754" y="815" width="2" height="2" fill="#3a3a3e"/><rect x="757" y="813" width="1" height="1" fill="#4a4a4e"/><rect x="757" y="818" width="1" height="1" fill="#4a4a4e"/><rect x="759" y="815" width="2" height="2" fill="#3a3a3e"/><rect x="762" y="813" width="1" height="1" fill="#4a4a4e"/><rect x="762" y="818" width="1" height="1" fill="#4a4a4e"/><rect x="764" y="815" width="2" height="2" fill="#3a3a3e"/><rect x="767" y="813" width="1" height="1" fill="#4a4a4e"/><rect x="767" y="818" width="1" height="1" fill="#4a4a4e"/><rect x="769" y="815" width="2" height="2" fill="#3a3a3e"/><rect x="772" y="813" width="1" height="1" fill="#4a4a4e"/><rect x="772" y="818" width="1" height="1" fill="#4a4a4e"/><rect x="774" y="815" width="2" height="2" fill="#3a3a3e"/><rect x="777" y="813" width="1" height="1" fill="#4a4a4e"/><rect x="777" y="818" width="1" height="1" fill="#4a4a4e"/><rect x="779" y="815" width="2" height="2" fill="#3a3a3e"/><rect x="782" y="813" width="1" height="1" fill="#4a4a4e"/><rect x="782" y="818" width="1" height="1" fill="#4a4a4e"/><rect x="784" y="815" width="2" height="2" fill="#3a3a3e"/><rect x="787" y="813" width="1" height="1" fill="#4a4a4e"/><rect x="787" y="818" width="1" height="1" fill="#4a4a4e"/><rect x="789" y="815" width="2" height="2" fill="#3a3a3e"/><rect x="792" y="813" width="1" height="1" fill="#4a4a4e"/><rect x="792" y="818" width="1" height="1" fill="#4a4a4e"/><rect x="794" y="815" width="2" height="2" fill="#3a3a3e"/><rect x="797" y="813" width="1" height="1" fill="#4a4a4e"/><rect x="797" y="818" width="1" height="1" fill="#4a4a4e"/><rect x="799" y="815" width="2" height="2" fill="#3a3a3e"/><rect x="802" y="813" width="1" height="1" fill="#4a4a4e"/><rect x="802" y="818" width="1" height="1" fill="#4a4a4e"/><rect x="804" y="815" width="2" height="2" fill="#3a3a3e"/><rect x="807" y="813" width="1" height="1" fill="#4a4a4e"/><rect x="807" y="818" width="1" height="1" fill="#4a4a4e"/><rect x="809" y="815" width="2" height="2" fill="#3a3a3e"/><rect x="812" y="813" width="1" height="1" fill="#4a4a4e"/><rect x="812" y="818" width="1" height="1" fill="#4a4a4e"/><rect x="814" y="815" width="2" height="2" fill="#3a3a3e"/><rect x="817" y="813" width="1" height="1" fill="#4a4a4e"/><rect x="817" y="818" width="1" height="1" fill="#4a4a4e"/><rect x="819" y="815" width="2" height="2" fill="#3a3a3e"/><rect x="822" y="813" width="1" height="1" fill="#4a4a4e"/><rect x="822" y="818" width="1" height="1" fill="#4a4a4e"/><rect x="824" y="815" width="2" height="2" fill="#3a3a3e"/><rect x="827" y="813" width="1" height="1" fill="#4a4a4e"/><rect x="827" y="818" width="1" height="1" fill="#4a4a4e"/><rect x="829" y="815" width="2" height="2" fill="#3a3a3e"/><rect x="832" y="813" width="1" height="1" fill="#4a4a4e"/><rect x="832" y="818" width="1" height="1" fill="#4a4a4e"/><rect x="834" y="815" width="2" height="2" fill="#3a3a3e"/><rect x="837" y="813" width="1" height="1" fill="#4a4a4e"/><rect x="837" y="818" width="1" height="1" fill="#4a4a4e"/><rect x="839" y="815" width="2" height="2" fill="#3a3a3e"/><rect x="842" y="813" width="1" height="1" fill="#4a4a4e"/><rect x="842" y="818" width="1" height="1" fill="#4a4a4e"/><rect x="844" y="815" width="2" height="2" fill="#3a3a3e"/><rect x="847" y="813" width="1" height="1" fill="#4a4a4e"/><rect x="847" y="818" width="1" height="1" fill="#4a4a4e"/><rect x="849" y="815" width="2" height="2" fill="#3a3a3e"/><rect x="852" y="813" width="1" height="1" fill="#4a4a4e"/><rect x="852" y="818" width="1" height="1" fill="#4a4a4e"/><rect x="854" y="815" width="2" height="2" fill="#3a3a3e"/><rect x="857" y="813" width="1" height="1" fill="#4a4a4e"/><rect x="857" y="818" width="1" height="1" fill="#4a4a4e"/><rect x="859" y="815" width="2" height="2" fill="#3a3a3e"/><rect x="862" y="813" width="1" height="1" fill="#4a4a4e"/><rect x="862" y="818" width="1" height="1" fill="#4a4a4e"/><rect x="864" y="815" width="2" height="2" fill="#3a3a3e"/><rect x="867" y="813" width="1" height="1" fill="#4a4a4e"/><rect x="867" y="818" width="1" height="1" fill="#4a4a4e"/><rect x="869" y="815" width="2" height="2" fill="#3a3a3e"/><rect x="872" y="813" width="1" height="1" fill="#4a4a4e"/><rect x="872" y="818" width="1" height="1" fill="#4a4a4e"/><rect x="874" y="815" width="2" height="2" fill="#3a3a3e"/><rect x="877" y="813" width="1" height="1" fill="#4a4a4e"/><rect x="877" y="818" width="1" height="1" fill="#4a4a4e"/><rect x="879" y="815" width="2" height="2" fill="#3a3a3e"/><rect x="882" y="813" width="1" height="1" fill="#4a4a4e"/><rect x="882" y="818" width="1" height="1" fill="#4a4a4e"/><rect x="884" y="815" width="2" height="2" fill="#3a3a3e"/><rect x="887" y="813" width="1" height="1" fill="#4a4a4e"/><rect x="887" y="818" width="1" height="1" fill="#4a4a4e"/><rect x="889" y="815" width="2" height="2" fill="#3a3a3e"/><rect x="892" y="813" width="1" height="1" fill="#4a4a4e"/><rect x="892" y="818" width="1" height="1" fill="#4a4a4e"/><rect x="894" y="815" width="2" height="2" fill="#3a3a3e"/><rect x="897" y="813" width="1" height="1" fill="#4a4a4e"/><rect x="897" y="818" width="1" height="1" fill="#4a4a4e"/><rect x="899" y="815" width="2" height="2" fill="#3a3a3e"/><rect x="902" y="813" width="1" height="1" fill="#4a4a4e"/><rect x="902" y="818" width="1" height="1" fill="#4a4a4e"/><rect x="904" y="815" width="2" height="2" fill="#3a3a3e"/><rect x="907" y="813" width="1" height="1" fill="#4a4a4e"/><rect x="907" y="818" width="1" height="1" fill="#4a4a4e"/><rect x="909" y="815" width="2" height="2" fill="#3a3a3e"/><rect x="912" y="813" width="1" height="1" fill="#4a4a4e"/><rect x="912" y="818" width="1" height="1" fill="#4a4a4e"/><rect x="914" y="815" width="2" height="2" fill="#3a3a3e"/><rect x="917" y="813" width="1" height="1" fill="#4a4a4e"/><rect x="917" y="818" width="1" height="1" fill="#4a4a4e"/><rect x="919" y="815" width="2" height="2" fill="#3a3a3e"/><rect x="922" y="813" width="1" height="1" fill="#4a4a4e"/><rect x="922" y="818" width="1" height="1" fill="#4a4a4e"/><rect x="924" y="815" width="2" height="2" fill="#3a3a3e"/><rect x="927" y="813" width="1" height="1" fill="#4a4a4e"/><rect x="927" y="818" width="1" height="1" fill="#4a4a4e"/><rect x="929" y="815" width="2" height="2" fill="#3a3a3e"/>
<path d="M941.3 813 L950.9 813 L946.1 818 Z" fill="#f1f1f1"/>
<rect x="962.7" y="809.2" width="6.9" height="1.6" fill="#f1f1f1"/><rect x="962.7" y="809.2" width="1.8" height="8.4" fill="#f1f1f1"/><rect x="966.9000000000001" y="809.2" width="2.7" height="8.4" fill="#f1f1f1"/><rect x="961.6" y="816.8000000000001" width="9.1" height="1.6" fill="#f1f1f1"/><rect x="965.4000000000001" y="818.2" width="1.5" height="5" fill="#f1f1f1"/>
<path d="M982.3 811.2 L993.5 821.2 M993.5 811.2 L982.3 821.2" stroke="#f1f1f1" stroke-width="2"/>
<path d="M535 843.7 L542.6 843.7 L538.8 847.7 Z" fill="#999999"/>
<path d="M571 843.5 C570.5 840 572 837 574.5 837 C576.5 837 577 839 575.8 840.5" fill="none" stroke="#5a5a5a" stroke-width="1.4"/><path d="M567.4 841.2 L573.1 841.2 L570.2 845.1 Z" fill="#5a5a5a"/><rect x="574" y="845.1" width="9.6" height="1.1" fill="#5a5a5a"/><rect x="570" y="847.8" width="7.5" height="3" fill="#5a5a5a"/><rect x="570" y="852.5" width="12.3" height="1.1" fill="#5a5a5a"/>
<path d="M613 841.2 L605.5 841.2 M608.8 837.9 L605.5 841.2 L608.8 844.5" stroke="#5a5a5a" stroke-width="1.7" fill="none"/><rect x="613.4" y="843.8" width="6.1" height="1.1" fill="#5a5a5a"/><rect x="606.8" y="846.4" width="12.7" height="2.2" fill="#5a5a5a"/><rect x="606.8" y="849.9" width="12.7" height="1.1" fill="#5a5a5a"/>
<path d="M631.4 841.2 L638.9 841.2 M635.6 837.9 L638.9 841.2 L635.6 844.5" stroke="#5a5a5a" stroke-width="1.7" fill="none"/><rect x="639.7" y="843.8" width="7" height="1.1" fill="#5a5a5a"/><rect x="634" y="846.4" width="12.7" height="2.2" fill="#5a5a5a"/><rect x="634" y="849.9" width="12.7" height="1.1" fill="#5a5a5a"/>
<path d="M669.3 836.3 L677 845.3 M677 836.3 L669.3 845.3" stroke="#5a5a5a" stroke-width="1.5" fill="none"/><rect x="678.6" y="836.3" width="6.2" height="2.2" fill="#5a5a5a"/><rect x="678.2" y="841.8" width="6.6" height="1.8" fill="#5a5a5a"/><rect x="669.9" y="846.4" width="14.9" height="2.2" fill="#5a5a5a"/><rect x="669.9" y="851.3" width="14.9" height="2.2" fill="#5a5a5a"/>
<text x="704" y="844" font-family="Liberation Sans" font-size="9.5" font-weight="700" fill="#c8c8c8" textLength="9" lengthAdjust="spacingAndGlyphs">ab</text><text x="704" y="851.5" font-family="Liberation Sans" font-size="9.5" font-weight="700" fill="#c8c8c8">c</text>
<path d="M715 841 L721 841 L721 849.8 L713 849.8" fill="none" stroke="#c8c8c8" stroke-width="2"/><path d="M710.7 849.8 L714.5 846 L714.5 853.6 Z" fill="#c8c8c8"/>
<rect x="1162" y="116" width="1" height="1" fill="#5eaae2"/><rect x="1162" y="121" width="1" height="1" fill="#5eaae2"/><rect x="1164" y="118" width="2" height="2" fill="#2a8ad4"/><rect x="1167" y="116" width="1" height="1" fill="#5eaae2"/><rect x="1167" y="121" width="1" height="1" fill="#5eaae2"/><rect x="1169" y="118" width="2" height="2" fill="#2a8ad4"/><rect x="1172" y="116" width="1" height="1" fill="#5eaae2"/><rect x="1172" y="121" width="1" height="1" fill="#5eaae2"/><rect x="1174" y="118" width="2" height="2" fill="#2a8ad4"/><rect x="1177" y="116" width="1" height="1" fill="#5eaae2"/><rect x="1177" y="121" width="1" height="1" fill="#5eaae2"/><rect x="1179" y="118" width="2" height="2" fill="#2a8ad4"/><rect x="1182" y="116" width="1" height="1" fill="#5eaae2"/><rect x="1182" y="121" width="1" height="1" fill="#5eaae2"/><rect x="1184" y="118" width="2" height="2" fill="#2a8ad4"/><rect x="1187" y="116" width="1" height="1" fill="#5eaae2"/><rect x="1187" y="121" width="1" height="1" fill="#5eaae2"/><rect x="1189" y="118" width="2" height="2" fill="#2a8ad4"/><rect x="1192" y="116" width="1" height="1" fill="#5eaae2"/><rect x="1192" y="121" width="1" height="1" fill="#5eaae2"/><rect x="1194" y="118" width="2" height="2" fill="#2a8ad4"/><rect x="1197" y="116" width="1" height="1" fill="#5eaae2"/><rect x="1197" y="121" width="1" height="1" fill="#5eaae2"/><rect x="1199" y="118" width="2" height="2" fill="#2a8ad4"/><rect x="1202" y="116" width="1" height="1" fill="#5eaae2"/><rect x="1202" y="121" width="1" height="1" fill="#5eaae2"/><rect x="1204" y="118" width="2" height="2" fill="#2a8ad4"/><rect x="1207" y="116" width="1" height="1" fill="#5eaae2"/><rect x="1207" y="121" width="1" height="1" fill="#5eaae2"/><rect x="1209" y="118" width="2" height="2" fill="#2a8ad4"/><rect x="1212" y="116" width="1" height="1" fill="#5eaae2"/><rect x="1212" y="121" width="1" height="1" fill="#5eaae2"/><rect x="1214" y="118" width="2" height="2" fill="#2a8ad4"/><rect x="1217" y="116" width="1" height="1" fill="#5eaae2"/><rect x="1217" y="121" width="1" height="1" fill="#5eaae2"/><rect x="1219" y="118" width="2" height="2" fill="#2a8ad4"/><rect x="1222" y="116" width="1" height="1" fill="#5eaae2"/><rect x="1222" y="121" width="1" height="1" fill="#5eaae2"/><rect x="1224" y="118" width="2" height="2" fill="#2a8ad4"/><rect x="1227" y="116" width="1" height="1" fill="#5eaae2"/><rect x="1227" y="121" width="1" height="1" fill="#5eaae2"/><rect x="1229" y="118" width="2" height="2" fill="#2a8ad4"/><rect x="1232" y="116" width="1" height="1" fill="#5eaae2"/><rect x="1232" y="121" width="1" height="1" fill="#5eaae2"/><rect x="1234" y="118" width="2" height="2" fill="#2a8ad4"/><rect x="1237" y="116" width="1" height="1" fill="#5eaae2"/><rect x="1237" y="121" width="1" height="1" fill="#5eaae2"/><rect x="1239" y="118" width="2" height="2" fill="#2a8ad4"/><rect x="1242" y="116" width="1" height="1" fill="#5eaae2"/><rect x="1242" y="121" width="1" height="1" fill="#5eaae2"/><rect x="1244" y="118" width="2" height="2" fill="#2a8ad4"/><rect x="1247" y="116" width="1" height="1" fill="#5eaae2"/><rect x="1247" y="121" width="1" height="1" fill="#5eaae2"/><rect x="1249" y="118" width="2" height="2" fill="#2a8ad4"/><rect x="1252" y="116" width="1" height="1" fill="#5eaae2"/><rect x="1252" y="121" width="1" height="1" fill="#5eaae2"/><rect x="1254" y="118" width="2" height="2" fill="#2a8ad4"/><rect x="1257" y="116" width="1" height="1" fill="#5eaae2"/><rect x="1257" y="121" width="1" height="1" fill="#5eaae2"/><rect x="1259" y="118" width="2" height="2" fill="#2a8ad4"/><rect x="1262" y="116" width="1" height="1" fill="#5eaae2"/><rect x="1262" y="121" width="1" height="1" fill="#5eaae2"/><rect x="1264" y="118" width="2" height="2" fill="#2a8ad4"/><rect x="1267" y="116" width="1" height="1" fill="#5eaae2"/><rect x="1267" y="121" width="1" height="1" fill="#5eaae2"/><rect x="1269" y="118" width="2" height="2" fill="#2a8ad4"/><rect x="1272" y="116" width="1" height="1" fill="#5eaae2"/><rect x="1272" y="121" width="1" height="1" fill="#5eaae2"/><rect x="1274" y="118" width="2" height="2" fill="#2a8ad4"/><rect x="1277" y="116" width="1" height="1" fill="#5eaae2"/><rect x="1277" y="121" width="1" height="1" fill="#5eaae2"/><rect x="1279" y="118" width="2" height="2" fill="#2a8ad4"/><rect x="1282" y="116" width="1" height="1" fill="#5eaae2"/><rect x="1282" y="121" width="1" height="1" fill="#5eaae2"/><rect x="1284" y="118" width="2" height="2" fill="#2a8ad4"/><rect x="1287" y="116" width="1" height="1" fill="#5eaae2"/><rect x="1287" y="121" width="1" height="1" fill="#5eaae2"/><rect x="1289" y="118" width="2" height="2" fill="#2a8ad4"/><rect x="1292" y="116" width="1" height="1" fill="#5eaae2"/><rect x="1292" y="121" width="1" height="1" fill="#5eaae2"/><rect x="1294" y="118" width="2" height="2" fill="#2a8ad4"/><rect x="1297" y="116" width="1" height="1" fill="#5eaae2"/><rect x="1297" y="121" width="1" height="1" fill="#5eaae2"/><rect x="1299" y="118" width="2" height="2" fill="#2a8ad4"/><rect x="1302" y="116" width="1" height="1" fill="#5eaae2"/><rect x="1302" y="121" width="1" height="1" fill="#5eaae2"/><rect x="1304" y="118" width="2" height="2" fill="#2a8ad4"/><rect x="1307" y="116" width="1" height="1" fill="#5eaae2"/><rect x="1307" y="121" width="1" height="1" fill="#5eaae2"/><rect x="1309" y="118" width="2" height="2" fill="#2a8ad4"/><rect x="1312" y="116" width="1" height="1" fill="#5eaae2"/><rect x="1312" y="121" width="1" height="1" fill="#5eaae2"/><rect x="1314" y="118" width="2" height="2" fill="#2a8ad4"/><rect x="1317" y="116" width="1" height="1" fill="#5eaae2"/><rect x="1317" y="121" width="1" height="1" fill="#5eaae2"/><rect x="1319" y="118" width="2" height="2" fill="#2a8ad4"/><rect x="1322" y="116" width="1" height="1" fill="#5eaae2"/><rect x="1322" y="121" width="1" height="1" fill="#5eaae2"/><rect x="1324" y="118" width="2" height="2" fill="#2a8ad4"/><rect x="1327" y="116" width="1" height="1" fill="#5eaae2"/><rect x="1327" y="121" width="1" height="1" fill="#5eaae2"/><rect x="1329" y="118" width="2" height="2" fill="#2a8ad4"/><rect x="1332" y="116" width="1" height="1" fill="#5eaae2"/><rect x="1332" y="121" width="1" height="1" fill="#5eaae2"/><rect x="1334" y="118" width="2" height="2" fill="#2a8ad4"/><rect x="1337" y="116" width="1" height="1" fill="#5eaae2"/><rect x="1337" y="121" width="1" height="1" fill="#5eaae2"/><rect x="1339" y="118" width="2" height="2" fill="#2a8ad4"/><rect x="1342" y="116" width="1" height="1" fill="#5eaae2"/><rect x="1342" y="121" width="1" height="1" fill="#5eaae2"/><rect x="1344" y="118" width="2" height="2" fill="#2a8ad4"/><rect x="1347" y="116" width="1" height="1" fill="#5eaae2"/><rect x="1347" y="121" width="1" height="1" fill="#5eaae2"/><rect x="1349" y="118" width="2" height="2" fill="#2a8ad4"/><rect x="1352" y="116" width="1" height="1" fill="#5eaae2"/><rect x="1352" y="121" width="1" height="1" fill="#5eaae2"/><rect x="1354" y="118" width="2" height="2" fill="#2a8ad4"/><rect x="1357" y="116" width="1" height="1" fill="#5eaae2"/><rect x="1357" y="121" width="1" height="1" fill="#5eaae2"/><rect x="1359" y="118" width="2" height="2" fill="#2a8ad4"/><rect x="1362" y="116" width="1" height="1" fill="#5eaae2"/><rect x="1362" y="121" width="1" height="1" fill="#5eaae2"/><rect x="1364" y="118" width="2" height="2" fill="#2a8ad4"/><rect x="1367" y="116" width="1" height="1" fill="#5eaae2"/><rect x="1367" y="121" width="1" height="1" fill="#5eaae2"/><rect x="1369" y="118" width="2" height="2" fill="#2a8ad4"/><rect x="1372" y="116" width="1" height="1" fill="#5eaae2"/><rect x="1372" y="121" width="1" height="1" fill="#5eaae2"/>
<path d="M1384 115.5 L1393.8 115.5 L1388.9 121 Z" fill="#ffffff"/>
<rect x="1406" y="112" width="6.9" height="1.6" fill="#ffffff"/><rect x="1406" y="112" width="1.8" height="8.4" fill="#ffffff"/><rect x="1410.2" y="112" width="2.7" height="8.4" fill="#ffffff"/><rect x="1404.9" y="119.6" width="9.1" height="1.6" fill="#ffffff"/><rect x="1408.7" y="121" width="1.5" height="5" fill="#ffffff"/>
<path d="M1425.6 114.2 L1436.6 123.8 M1436.6 114.2 L1425.6 123.8" stroke="#ffffff" stroke-width="2"/>
<circle cx="1031" cy="149.8" r="7.2" fill="#555555"/><path d="M1027 149.8 L1035 149.8 M1030.5 146.3 L1027 149.8 L1030.5 153.3" stroke="#2d2d30" stroke-width="2" fill="none"/>
<circle cx="1058" cy="149.8" r="7.2" fill="#555555"/><path d="M1062 149.8 L1054 149.8 M1058.5 146.3 L1062 149.8 L1058.5 153.3" stroke="#2d2d30" stroke-width="2" fill="none"/>
<path d="M1110.5 141.5 L1115 141.5 L1116 140 L1122 140 L1122 150.2 L1110.5 150.2 Z" fill="#dcb67a"/><rect x="1116.8" y="141.4" width="3.8" height="1.3" fill="#8a7150"/><rect x="1104.7" y="147.1" width="10.3" height="8.9" fill="#2d2d30" stroke="#c8c8c8" stroke-width="1.4"/><rect x="1104" y="146.4" width="11.6" height="2.2" fill="#c8c8c8"/><path d="M1106.5 145.5 L1106.5 143.8 Q1106.5 142.3 1108.2 142.3 L1109 142.3" fill="none" stroke="#75beff" stroke-width="1.6"/><path d="M1108.6 139.9 L1111.2 142.3 L1108.6 144.7 Z" fill="#75beff"/><path d="M1121 151.3 L1121 153 Q1121 154.5 1119.3 154.5 L1118.5 154.5" fill="none" stroke="#75beff" stroke-width="1.6"/><path d="M1118.9 152.1 L1116.3 154.5 L1118.9 156.9 Z" fill="#75beff"/>
<path d="M1078.5 150 L1078.5 158.2 L1091.5 158.2 L1091.5 150" fill="#28282b" stroke="#b8b8b8" stroke-width="1.3"/><path d="M1077 150.5 L1085 142.5 L1093 150.5" fill="#28282b" stroke="#d8d8d8" stroke-width="1.5"/><path d="M1089.5 141 L1089.5 146.5" stroke="#d8d8d8" stroke-width="1.3"/><rect x="1083.1" y="151.3" width="3.8" height="7" fill="#d0d0d0"/>
<path d="M1130 148 L1137.5 148 L1133.75 152 Z" fill="#999999"/>
<circle cx="1167.5" cy="151.5" r="6" fill="none" stroke="#c8c8c8" stroke-width="1.5"/><path d="M1167 147.5 L1167 152 L1170 152" stroke="#c8c8c8" stroke-width="1.4" fill="none"/><path d="M1158 140 L1164 140 L1161 144 Z" fill="#c8c8c8"/><rect x="1160.5" y="143" width="1.2" height="3" fill="#c8c8c8"/>
<path d="M1182 148 L1189.5 148 L1185.75 152 Z" fill="#999999"/>
<g fill="none" stroke="#c8c8c8" stroke-width="2"><path d="M1212 146 L1200 146 M1204 142.5 L1200 146 L1204 149.5 M1200 154.5 L1212 154.5 M1208 151 L1212 154.5 L1208 158"/></g>
<g fill="none" stroke="#c8c8c8" stroke-width="1.4"><rect x="1227.5" y="149" width="7" height="6.5"/><path d="M1230.5 146.5 L1237.5 146.5 L1237.5 152.5 M1233.5 143.5 L1240.5 143.5 L1240.5 150"/></g><rect x="1229" y="151.5" width="4" height="1.5" fill="#75beff"/>
<g fill="none" stroke="#c8c8c8" stroke-width="1.4"><path d="M1254 155 L1252 155 L1252 142 L1262 142 L1265 145 L1268 145 L1268 155 L1266 155"/><path d="M1256.5 147 L1262.5 147 L1265 149.5 L1265 158.5 L1256.5 158.5 Z" fill="#2d2d30"/><path d="M1258.5 152 L1263 152 M1258.5 155 L1263 155"/></g>
<path d="M1295 145.5 L1290.5 150 L1295 154.5 M1299.5 145.5 L1304 150 L1299.5 154.5" fill="none" stroke="#d0d0d0" stroke-width="1.5"/>
<path d="M1316.5 157.5 L1324.5 149.5" stroke="#c8c8c8" stroke-width="3.4" stroke-linecap="round"/><circle cx="1328" cy="146" r="4.6" fill="#c8c8c8"/><path d="M1327 143 L1331 139 L1335 143 L1331 147 Z" fill="#2d2d30"/>
<g stroke="#f1f1f1" fill="none"><circle cx="1421.6" cy="177.6" r="4.1" stroke-width="2.6"/><path d="M1418.3 181 L1412.3 187" stroke-width="3.2" stroke-linecap="butt"/></g>
<path d="M1434.2 179 L1441.7 179 L1438 183 Z" fill="#f1f1f1"/>
<rect x="1029" y="201.9" width="18" height="4" fill="#c8c8c8"/><rect x="1029" y="201.9" width="1.3" height="8.1" fill="#c8c8c8"/><rect x="1045.7" y="201.9" width="1.3" height="15.3" fill="#c8c8c8"/><rect x="1040.2" y="215.9" width="6.8" height="1.3" fill="#c8c8c8"/><path fill-rule="evenodd" d="M1029 211.5 L1030.5 210.5 L1033 214 L1037.5 210 L1039.5 211 L1039.5 219 L1037.5 220 L1033 216 L1030.5 218.5 L1029 217.5 Z M1030.5 213 L1030.5 216.2 L1032 214.6 Z M1037.5 212.8 L1037.5 217.2 L1035 215 Z" fill="#d990e8" stroke="#252526" stroke-width="0.4"/>
<path d="M1034.2 229.5 L1034.2 237.5 L1026.2 237.5 Z" fill="#f1f1f1"/>
<rect x="1052.3" y="226.1" width="16.4" height="14.6" fill="none" stroke="#a472b4" stroke-width="1.4"/><path d="M1054 231.4 L1061 231.4 M1057.5 227.9 L1057.5 234.9 M1059.7 237 L1066.7 237 M1063.2 233.5 L1063.2 240.5" stroke="#d0d0d0" stroke-width="2.2"/>
<path d="M1050.2 251.7 L1055.4 257.2 L1050.2 262.7 Z" fill="none" stroke="#f1f1f1" stroke-width="1.3"/>
<rect x="1074.2" y="252.3" width="4.9" height="6.3" fill="#c8c8c8"/><rect x="1080.3" y="254.6" width="2.7" height="1.2" fill="#c8c8c8"/><rect x="1084" y="252" width="8" height="8.6" fill="#c8c8c8"/>
<path d="M1050.2 274.7 L1055.4 280.2 L1050.2 285.7 Z" fill="none" stroke="#f1f1f1" stroke-width="1.3"/>
<path d="M1075 276 L1078.5 276 L1079.5 272.1 L1092 272.1 L1092 286.4 L1075 286.4 Z" fill="#dcb67a"/><rect x="1081" y="273.7" width="9.5" height="1.2" fill="#252526"/><rect x="1082.5" y="279.4" width="10" height="9.6" fill="#252526"/><rect x="1083.6" y="280.5" width="7.8" height="7.4" fill="#1d2a33" stroke="#1ba1e2" stroke-width="1.5"/><path d="M1085.8 285.8 L1089 282.6 M1086.5 282.4 L1089.3 282.4 L1089.3 285.2" stroke="#1ba1e2" stroke-width="1.3" fill="none"/>
<path d="M1057 298.5 L1057 306.5 L1049 306.5 Z" fill="#f1f1f1"/>
<path d="M1075.0 306.5 L1075.0 301.8 L1077.5 301.8 L1080.7 297 L1091.5 297 L1091.5 310.6 L1079.2 310.6" fill="#252526" stroke="#dcb67a" stroke-width="1.4"/><path d="M1079.2 306.3 L1086.5 305.6 L1090.0 309.9 L1079.2 310.6 Z" fill="#dcb67a"/><path d="M1075.0 304.5 L1079.2 304.5 L1079.2 310.6" fill="none" stroke="#dcb67a" stroke-width="1.3"/><path d="M1073.9 306.7 L1080.7 306.7 L1077.3 309.3 Z" fill="#c8c8c8"/><rect x="1076.6000000000001" y="308.5" width="1.4" height="3" fill="#c8c8c8"/>
<path d="M1072.6000000000001 320.7 L1077.8000000000002 326.2 L1072.6000000000001 331.7 Z" fill="none" stroke="#f1f1f1" stroke-width="1.3"/>
<path d="M1099.7 319 L1107.1 319 L1111.2 323.1 L1111.2 333 L1099.7 333 Z" fill="#252526" stroke="#c0c0c0" stroke-width="1.3"/><path d="M1106.8 319 L1111.2 323.4 L1106.8 323.4 Z" fill="#d0d0d0"/><path d="M1102.8999999999999 323 L1102.8999999999999 329.8 M1102.8999999999999 326.3 L1107.5 326.3 L1107.5 329.8" stroke="#b073c7" stroke-width="1.6" fill="none"/>
<path d="M1072.6000000000001 343.7 L1077.8000000000002 349.2 L1072.6000000000001 354.7 Z" fill="none" stroke="#f1f1f1" stroke-width="1.3"/>
<path d="M1099.7 342 L1107.1 342 L1111.2 346.1 L1111.2 356 L1099.7 356 Z" fill="#252526" stroke="#c0c0c0" stroke-width="1.3"/><path d="M1106.8 342 L1111.2 346.4 L1106.8 346.4 Z" fill="#d0d0d0"/><path d="M1102.8999999999999 346 L1102.8999999999999 352.8 M1102.8999999999999 349.3 L1107.5 349.3 L1107.5 352.8" stroke="#b073c7" stroke-width="1.6" fill="none"/>
<path d="M1057 367.5 L1057 375.5 L1049 375.5 Z" fill="#f1f1f1"/>
<path d="M1075.0 375.5 L1075.0 370.8 L1077.5 370.8 L1080.7 366 L1091.5 366 L1091.5 379.6 L1079.2 379.6" fill="#252526" stroke="#dcb67a" stroke-width="1.4"/><path d="M1079.2 375.3 L1086.5 374.6 L1090.0 378.9 L1079.2 379.6 Z" fill="#dcb67a"/><path d="M1075.0 373.5 L1079.2 373.5 L1079.2 379.6" fill="none" stroke="#dcb67a" stroke-width="1.3"/><path d="M1073.9 375.7 L1080.7 375.7 L1077.3 378.3 Z" fill="#c8c8c8"/><rect x="1076.6000000000001" y="377.5" width="1.4" height="3" fill="#c8c8c8"/>
<path d="M1072.6000000000001 389.7 L1077.8000000000002 395.2 L1072.6000000000001 400.7 Z" fill="none" stroke="#f1f1f1" stroke-width="1.3"/>
<path d="M1097.7 393.6 L1105.5 393.6 M1101.6 389.7 L1101.6 397.5 M1105.4 396.2 L1113.0 396.2 M1109.3 392.4 L1109.3 400" stroke="#b66fc4" stroke-width="2.2"/>
<path d="M1097.7 416.6 L1105.5 416.6 M1101.6 412.7 L1101.6 420.5 M1105.4 419.2 L1113.0 419.2 M1109.3 415.4 L1109.3 423" stroke="#b66fc4" stroke-width="2.2"/>
<path d="M1075 438.6 L1080 438.6 L1081.3 435.6 L1092 435.6 L1092 450 L1075 450 Z" fill="#dcb67a"/><rect x="1082.3" y="437" width="8" height="1.2" fill="#2d2d30"/><path d="M1074 445.3 L1081.5 445.3 L1077.75 448.3 Z" fill="#c8c8c8" stroke="#252526" stroke-width="0.6"/><rect x="1077.1" y="447.5" width="1.4" height="3.5" fill="#c8c8c8"/>
<rect x="1057" y="663" width="1" height="1" fill="#4a4a4e"/><rect x="1057" y="668" width="1" height="1" fill="#4a4a4e"/><rect x="1059" y="665" width="2" height="2" fill="#3a3a3e"/><rect x="1062" y="663" width="1" height="1" fill="#4a4a4e"/><rect x="1062" y="668" width="1" height="1" fill="#4a4a4e"/><rect x="1064" y="665" width="2" height="2" fill="#3a3a3e"/><rect x="1067" y="663" width="1" height="1" fill="#4a4a4e"/><rect x="1067" y="668" width="1" height="1" fill="#4a4a4e"/><rect x="1069" y="665" width="2" height="2" fill="#3a3a3e"/><rect x="1072" y="663" width="1" height="1" fill="#4a4a4e"/><rect x="1072" y="668" width="1" height="1" fill="#4a4a4e"/><rect x="1074" y="665" width="2" height="2" fill="#3a3a3e"/><rect x="1077" y="663" width="1" height="1" fill="#4a4a4e"/><rect x="1077" y="668" width="1" height="1" fill="#4a4a4e"/><rect x="1079" y="665" width="2" height="2" fill="#3a3a3e"/><rect x="1082" y="663" width="1" height="1" fill="#4a4a4e"/><rect x="1082" y="668" width="1" height="1" fill="#4a4a4e"/><rect x="1084" y="665" width="2" height="2" fill="#3a3a3e"/><rect x="1087" y="663" width="1" height="1" fill="#4a4a4e"/><rect x="1087" y="668" width="1" height="1" fill="#4a4a4e"/><rect x="1089" y="665" width="2" height="2" fill="#3a3a3e"/><rect x="1092" y="663" width="1" height="1" fill="#4a4a4e"/><rect x="1092" y="668" width="1" height="1" fill="#4a4a4e"/><rect x="1094" y="665" width="2" height="2" fill="#3a3a3e"/><rect x="1097" y="663" width="1" height="1" fill="#4a4a4e"/><rect x="1097" y="668" width="1" height="1" fill="#4a4a4e"/><rect x="1099" y="665" width="2" height="2" fill="#3a3a3e"/><rect x="1102" y="663" width="1" height="1" fill="#4a4a4e"/><rect x="1102" y="668" width="1" height="1" fill="#4a4a4e"/><rect x="1104" y="665" width="2" height="2" fill="#3a3a3e"/><rect x="1107" y="663" width="1" height="1" fill="#4a4a4e"/><rect x="1107" y="668" width="1" height="1" fill="#4a4a4e"/><rect x="1109" y="665" width="2" height="2" fill="#3a3a3e"/><rect x="1112" y="663" width="1" height="1" fill="#4a4a4e"/><rect x="1112" y="668" width="1" height="1" fill="#4a4a4e"/><rect x="1114" y="665" width="2" height="2" fill="#3a3a3e"/><rect x="1117" y="663" width="1" height="1" fill="#4a4a4e"/><rect x="1117" y="668" width="1" height="1" fill="#4a4a4e"/><rect x="1119" y="665" width="2" height="2" fill="#3a3a3e"/><rect x="1122" y="663" width="1" height="1" fill="#4a4a4e"/><rect x="1122" y="668" width="1" height="1" fill="#4a4a4e"/><rect x="1124" y="665" width="2" height="2" fill="#3a3a3e"/><rect x="1127" y="663" width="1" height="1" fill="#4a4a4e"/><rect x="1127" y="668" width="1" height="1" fill="#4a4a4e"/><rect x="1129" y="665" width="2" height="2" fill="#3a3a3e"/><rect x="1132" y="663" width="1" height="1" fill="#4a4a4e"/><rect x="1132" y="668" width="1" height="1" fill="#4a4a4e"/><rect x="1134" y="665" width="2" height="2" fill="#3a3a3e"/><rect x="1137" y="663" width="1" height="1" fill="#4a4a4e"/><rect x="1137" y="668" width="1" height="1" fill="#4a4a4e"/><rect x="1139" y="665" width="2" height="2" fill="#3a3a3e"/><rect x="1142" y="663" width="1" height="1" fill="#4a4a4e"/><rect x="1142" y="668" width="1" height="1" fill="#4a4a4e"/><rect x="1144" y="665" width="2" height="2" fill="#3a3a3e"/><rect x="1147" y="663" width="1" height="1" fill="#4a4a4e"/><rect x="1147" y="668" width="1" height="1" fill="#4a4a4e"/><rect x="1149" y="665" width="2" height="2" fill="#3a3a3e"/><rect x="1152" y="663" width="1" height="1" fill="#4a4a4e"/><rect x="1152" y="668" width="1" height="1" fill="#4a4a4e"/><rect x="1154" y="665" width="2" height="2" fill="#3a3a3e"/><rect x="1157" y="663" width="1" height="1" fill="#4a4a4e"/><rect x="1157" y="668" width="1" height="1" fill="#4a4a4e"/><rect x="1159" y="665" width="2" height="2" fill="#3a3a3e"/><rect x="1162" y="663" width="1" height="1" fill="#4a4a4e"/><rect x="1162" y="668" width="1" height="1" fill="#4a4a4e"/><rect x="1164" y="665" width="2" height="2" fill="#3a3a3e"/><rect x="1167" y="663" width="1" height="1" fill="#4a4a4e"/><rect x="1167" y="668" width="1" height="1" fill="#4a4a4e"/><rect x="1169" y="665" width="2" height="2" fill="#3a3a3e"/><rect x="1172" y="663" width="1" height="1" fill="#4a4a4e"/><rect x="1172" y="668" width="1" height="1" fill="#4a4a4e"/><rect x="1174" y="665" width="2" height="2" fill="#3a3a3e"/><rect x="1177" y="663" width="1" height="1" fill="#4a4a4e"/><rect x="1177" y="668" width="1" height="1" fill="#4a4a4e"/><rect x="1179" y="665" width="2" height="2" fill="#3a3a3e"/><rect x="1182" y="663" width="1" height="1" fill="#4a4a4e"/><rect x="1182" y="668" width="1" height="1" fill="#4a4a4e"/><rect x="1184" y="665" width="2" height="2" fill="#3a3a3e"/><rect x="1187" y="663" width="1" height="1" fill="#4a4a4e"/><rect x="1187" y="668" width="1" height="1" fill="#4a4a4e"/><rect x="1189" y="665" width="2" height="2" fill="#3a3a3e"/><rect x="1192" y="663" width="1" height="1" fill="#4a4a4e"/><rect x="1192" y="668" width="1" height="1" fill="#4a4a4e"/><rect x="1194" y="665" width="2" height="2" fill="#3a3a3e"/><rect x="1197" y="663" width="1" height="1" fill="#4a4a4e"/><rect x="1197" y="668" width="1" height="1" fill="#4a4a4e"/><rect x="1199" y="665" width="2" height="2" fill="#3a3a3e"/><rect x="1202" y="663" width="1" height="1" fill="#4a4a4e"/><rect x="1202" y="668" width="1" height="1" fill="#4a4a4e"/><rect x="1204" y="665" width="2" height="2" fill="#3a3a3e"/><rect x="1207" y="663" width="1" height="1" fill="#4a4a4e"/><rect x="1207" y="668" width="1" height="1" fill="#4a4a4e"/><rect x="1209" y="665" width="2" height="2" fill="#3a3a3e"/><rect x="1212" y="663" width="1" height="1" fill="#4a4a4e"/><rect x="1212" y="668" width="1" height="1" fill="#4a4a4e"/><rect x="1214" y="665" width="2" height="2" fill="#3a3a3e"/><rect x="1217" y="663" width="1" height="1" fill="#4a4a4e"/><rect x="1217" y="668" width="1" height="1" fill="#4a4a4e"/><rect x="1219" y="665" width="2" height="2" fill="#3a3a3e"/><rect x="1222" y="663" width="1" height="1" fill="#4a4a4e"/><rect x="1222" y="668" width="1" height="1" fill="#4a4a4e"/><rect x="1224" y="665" width="2" height="2" fill="#3a3a3e"/><rect x="1227" y="663" width="1" height="1" fill="#4a4a4e"/><rect x="1227" y="668" width="1" height="1" fill="#4a4a4e"/><rect x="1229" y="665" width="2" height="2" fill="#3a3a3e"/><rect x="1232" y="663" width="1" height="1" fill="#4a4a4e"/><rect x="1232" y="668" width="1" height="1" fill="#4a4a4e"/><rect x="1234" y="665" width="2" height="2" fill="#3a3a3e"/><rect x="1237" y="663" width="1" height="1" fill="#4a4a4e"/><rect x="1237" y="668" width="1" height="1" fill="#4a4a4e"/><rect x="1239" y="665" width="2" height="2" fill="#3a3a3e"/><rect x="1242" y="663" width="1" height="1" fill="#4a4a4e"/><rect x="1242" y="668" width="1" height="1" fill="#4a4a4e"/><rect x="1244" y="665" width="2" height="2" fill="#3a3a3e"/><rect x="1247" y="663" width="1" height="1" fill="#4a4a4e"/><rect x="1247" y="668" width="1" height="1" fill="#4a4a4e"/><rect x="1249" y="665" width="2" height="2" fill="#3a3a3e"/><rect x="1252" y="663" width="1" height="1" fill="#4a4a4e"/><rect x="1252" y="668" width="1" height="1" fill="#4a4a4e"/><rect x="1254" y="665" width="2" height="2" fill="#3a3a3e"/><rect x="1257" y="663" width="1" height="1" fill="#4a4a4e"/><rect x="1257" y="668" width="1" height="1" fill="#4a4a4e"/><rect x="1259" y="665" width="2" height="2" fill="#3a3a3e"/><rect x="1262" y="663" width="1" height="1" fill="#4a4a4e"/><rect x="1262" y="668" width="1" height="1" fill="#4a4a4e"/><rect x="1264" y="665" width="2" height="2" fill="#3a3a3e"/><rect x="1267" y="663" width="1" height="1" fill="#4a4a4e"/><rect x="1267" y="668" width="1" height="1" fill="#4a4a4e"/><rect x="1269" y="665" width="2" height="2" fill="#3a3a3e"/><rect x="1272" y="663" width="1" height="1" fill="#4a4a4e"/><rect x="1272" y="668" width="1" height="1" fill="#4a4a4e"/><rect x="1274" y="665" width="2" height="2" fill="#3a3a3e"/><rect x="1277" y="663" width="1" height="1" fill="#4a4a4e"/><rect x="1277" y="668" width="1" height="1" fill="#4a4a4e"/><rect x="1279" y="665" width="2" height="2" fill="#3a3a3e"/><rect x="1282" y="663" width="1" height="1" fill="#4a4a4e"/><rect x="1282" y="668" width="1" height="1" fill="#4a4a4e"/><rect x="1284" y="665" width="2" height="2" fill="#3a3a3e"/><rect x="1287" y="663" width="1" height="1" fill="#4a4a4e"/><rect x="1287" y="668" width="1" height="1" fill="#4a4a4e"/><rect x="1289" y="665" width="2" height="2" fill="#3a3a3e"/><rect x="1292" y="663" width="1" height="1" fill="#4a4a4e"/><rect x="1292" y="668" width="1" height="1" fill="#4a4a4e"/><rect x="1294" y="665" width="2" height="2" fill="#3a3a3e"/><rect x="1297" y="663" width="1" height="1" fill="#4a4a4e"/><rect x="1297" y="668" width="1" height="1" fill="#4a4a4e"/><rect x="1299" y="665" width="2" height="2" fill="#3a3a3e"/><rect x="1302" y="663" width="1" height="1" fill="#4a4a4e"/><rect x="1302" y="668" width="1" height="1" fill="#4a4a4e"/><rect x="1304" y="665" width="2" height="2" fill="#3a3a3e"/><rect x="1307" y="663" width="1" height="1" fill="#4a4a4e"/><rect x="1307" y="668" width="1" height="1" fill="#4a4a4e"/><rect x="1309" y="665" width="2" height="2" fill="#3a3a3e"/><rect x="1312" y="663" width="1" height="1" fill="#4a4a4e"/><rect x="1312" y="668" width="1" height="1" fill="#4a4a4e"/><rect x="1314" y="665" width="2" height="2" fill="#3a3a3e"/><rect x="1317" y="663" width="1" height="1" fill="#4a4a4e"/><rect x="1317" y="668" width="1" height="1" fill="#4a4a4e"/><rect x="1319" y="665" width="2" height="2" fill="#3a3a3e"/><rect x="1322" y="663" width="1" height="1" fill="#4a4a4e"/><rect x="1322" y="668" width="1" height="1" fill="#4a4a4e"/><rect x="1324" y="665" width="2" height="2" fill="#3a3a3e"/><rect x="1327" y="663" width="1" height="1" fill="#4a4a4e"/><rect x="1327" y="668" width="1" height="1" fill="#4a4a4e"/><rect x="1329" y="665" width="2" height="2" fill="#3a3a3e"/><rect x="1332" y="663" width="1" height="1" fill="#4a4a4e"/><rect x="1332" y="668" width="1" height="1" fill="#4a4a4e"/><rect x="1334" y="665" width="2" height="2" fill="#3a3a3e"/><rect x="1337" y="663" width="1" height="1" fill="#4a4a4e"/><rect x="1337" y="668" width="1" height="1" fill="#4a4a4e"/><rect x="1339" y="665" width="2" height="2" fill="#3a3a3e"/><rect x="1342" y="663" width="1" height="1" fill="#4a4a4e"/><rect x="1342" y="668" width="1" height="1" fill="#4a4a4e"/><rect x="1344" y="665" width="2" height="2" fill="#3a3a3e"/><rect x="1347" y="663" width="1" height="1" fill="#4a4a4e"/><rect x="1347" y="668" width="1" height="1" fill="#4a4a4e"/><rect x="1349" y="665" width="2" height="2" fill="#3a3a3e"/><rect x="1352" y="663" width="1" height="1" fill="#4a4a4e"/><rect x="1352" y="668" width="1" height="1" fill="#4a4a4e"/><rect x="1354" y="665" width="2" height="2" fill="#3a3a3e"/><rect x="1357" y="663" width="1" height="1" fill="#4a4a4e"/><rect x="1357" y="668" width="1" height="1" fill="#4a4a4e"/><rect x="1359" y="665" width="2" height="2" fill="#3a3a3e"/><rect x="1362" y="663" width="1" height="1" fill="#4a4a4e"/><rect x="1362" y="668" width="1" height="1" fill="#4a4a4e"/><rect x="1364" y="665" width="2" height="2" fill="#3a3a3e"/><rect x="1367" y="663" width="1" height="1" fill="#4a4a4e"/><rect x="1367" y="668" width="1" height="1" fill="#4a4a4e"/><rect x="1369" y="665" width="2" height="2" fill="#3a3a3e"/><rect x="1372" y="663" width="1" height="1" fill="#4a4a4e"/><rect x="1372" y="668" width="1" height="1" fill="#4a4a4e"/>
<path d="M1383.8 663 L1394 663 L1388.9 668.3 Z" fill="#f1f1f1"/>
<rect x="1405.5" y="659.6" width="6.9" height="1.6" fill="#f1f1f1"/><rect x="1405.5" y="659.6" width="1.8" height="8.4" fill="#f1f1f1"/><rect x="1409.7" y="659.6" width="2.7" height="8.4" fill="#f1f1f1"/><rect x="1404.4" y="667.2" width="9.1" height="1.6" fill="#f1f1f1"/><rect x="1408.2" y="668.6" width="1.5" height="5" fill="#f1f1f1"/>
<path d="M1425.3 660.8 L1436.5 670.5 M1436.5 660.8 L1425.3 670.5" stroke="#f1f1f1" stroke-width="2"/>
<path d="M1434.7 693 L1441.2 693 L1438 696.5 Z" fill="#f1f1f1"/>
<rect x="1027" y="715.0" width="6" height="1" fill="#c8c8c8"/><rect x="1027" y="717.0" width="6" height="1" fill="#c8c8c8"/><rect x="1027" y="719.0" width="6" height="1" fill="#c8c8c8"/><rect x="1027" y="721.0" width="6" height="1" fill="#c8c8c8"/><rect x="1027" y="723.0" width="6" height="1" fill="#c8c8c8"/><rect x="1027" y="725.0" width="6" height="1" fill="#c8c8c8"/><rect x="1027" y="728.0" width="6" height="1" fill="#c8c8c8"/><rect x="1027" y="730.0" width="6" height="1" fill="#c8c8c8"/><rect x="1034.2" y="717.0" width="2.8" height="1" fill="#c8c8c8"/><rect x="1034.2" y="719.0" width="2.8" height="1" fill="#c8c8c8"/><rect x="1034.2" y="721.0" width="2.8" height="1" fill="#c8c8c8"/><rect x="1034.2" y="723.0" width="2.8" height="1" fill="#c8c8c8"/><rect x="1034.2" y="725.0" width="2.8" height="1" fill="#c8c8c8"/><rect x="1034.2" y="730.0" width="2.8" height="1" fill="#c8c8c8"/><rect x="1020" y="715" width="5" height="5" fill="#c8c8c8"/><rect x="1020" y="726" width="5" height="5" fill="#c8c8c8"/><path d="M1021 717.5 L1024 717.5 M1022.5 716 L1022.5 719 M1021 728.5 L1024 728.5 M1022.5 727 L1022.5 730" stroke="#2d2d30" stroke-width="0.9"/>
<rect x="1042.5" y="713.3" width="12" height="10.5" fill="#a8a8a8" stroke="#e0e0e0" stroke-width="0.8"/><path d="M1045.5 722 L1048.5 714.8 L1051.5 722 M1046.6 719.5 L1050.4 719.5" stroke="#505050" stroke-width="1.3" fill="none"/><path d="M1043.3 725.3 L1050.5 725.3 L1050.5 727 L1046 731 L1050.8 731 L1050.8 732.8 L1043 732.8 L1043 731 L1047.5 727 L1043.3 727 Z" fill="#a8a8a8" stroke="#e0e0e0" stroke-width="0.7"/><path d="M1054.5 714 L1058 714 L1060.5 716.5 L1060.5 719" fill="none" stroke="#e0e0e0" stroke-width="1"/><path d="M1056 718.4 L1058.9 718.4 L1058.9 724 L1061.8 724 L1057.45 730.9 L1053.3 724 L1056 724 Z" fill="#75beff" stroke="#e8e8e8" stroke-width="0.7"/>
<path d="M1073.5 732 L1081.5 724" stroke="#e8e8e8" stroke-width="5.4" stroke-linecap="round"/><path d="M1073.5 732 L1081.5 724" stroke="#b8b8b8" stroke-width="3.4" stroke-linecap="round"/><circle cx="1085.8" cy="719.5" r="6.6" fill="#b8b8b8" stroke="#e8e8e8" stroke-width="0.9"/><path d="M1086.3 717.5 L1089.5 714.3 L1091.5 716.3 L1088.3 719.5 Z" fill="#3a3a3a" stroke="#3a3a3a" stroke-width="1.2"/>
<rect x="1016.5" y="745.5" width="10" height="10" fill="none" stroke="#f1f1f1" stroke-width="1.2"/><rect x="1018.5" y="750" width="6" height="1.3" fill="#f1f1f1"/>
</svg>
<div class="t" style="left:57.7px;top:20.32px;font-size:16.4px;color:#999999;font-weight:400;"><span style="font-size:16.4px">Dll2 - Microsoft Visual Studio</span></div>
<div class="t" style="left:1114px;top:15.28px;font-size:16.5px;color:#999999;font-weight:400;"><span style="font-size:15px">快速启动</span><span style="font-size:16.5px"> (Ctrl+Q)</span></div>
<div class="t" style="left:14px;top:50.80px;font-size:15px;color:#f1f1f1;font-weight:400;"><span style="font-size:15px">文件</span><span style="font-size:14.8px">(F)</span></div>
<div class="t" style="left:86px;top:50.80px;font-size:15px;color:#f1f1f1;font-weight:400;"><span style="font-size:15px">编辑</span><span style="font-size:14.8px">(E)</span></div>
<div class="t" style="left:158px;top:50.80px;font-size:15px;color:#f1f1f1;font-weight:400;"><span style="font-size:15px">视图</span><span style="font-size:14.8px">(V)</span></div>
<div class="t" style="left:232px;top:50.80px;font-size:15px;color:#f1f1f1;font-weight:400;"><span style="font-size:15px">项目</span><span style="font-size:14.8px">(P)</span></div>
<div class="t" style="left:306px;top:50.80px;font-size:15px;color:#f1f1f1;font-weight:400;"><span style="font-size:15px">生成</span><span style="font-size:14.8px">(B)</span></div>
<div class="t" style="left:380px;top:50.28px;font-size:16.5px;color:#f1f1f1;font-weight:400;"><span style="font-size:16.5px">Incredibuild</span></div>
<div class="t" style="left:491.5px;top:50.80px;font-size:15px;color:#f1f1f1;font-weight:400;"><span style="font-size:15px">调试</span><span style="font-size:14.8px">(D)</span></div>
<div class="t" style="left:567.5px;top:50.80px;font-size:15px;color:#f1f1f1;font-weight:400;"><span style="font-size:15px">团队</span><span style="font-size:14.8px">(M)</span></div>
<div class="t" style="left:647.5px;top:50.80px;font-size:15px;color:#f1f1f1;font-weight:400;"><span style="font-size:15px">工具</span><span style="font-size:14.8px">(T)</span></div>
<div class="t" style="left:721.5px;top:50.80px;font-size:15px;color:#f1f1f1;font-weight:400;"><span style="font-size:15px">测试</span><span style="font-size:14.8px">(S)</span></div>
<div class="t" style="left:795px;top:50.80px;font-size:15px;color:#f1f1f1;font-weight:400;"><span style="font-size:15px">分析</span><span style="font-size:14.8px">(N)</span></div>
<div class="t" style="left:871px;top:50.80px;font-size:15px;color:#f1f1f1;font-weight:400;"><span style="font-size:15px">窗口</span><span style="font-size:14.8px">(W)</span></div>
<div class="t" style="left:951px;top:50.80px;font-size:15px;color:#f1f1f1;font-weight:400;"><span style="font-size:15px">帮助</span><span style="font-size:14.8px">(H)</span></div>
<div class="t" style="left:345.8px;top:79.28px;font-size:16.5px;color:#f1f1f1;font-weight:400;"><span style="font-size:16.5px">Debug</span></div>
<div class="t" style="left:434px;top:79.28px;font-size:16.5px;color:#f1f1f1;font-weight:400;"><span style="font-size:16.5px">x86</span></div>
<div class="t" style="left:601px;top:79.28px;font-size:16.5px;color:#f1f1f1;font-weight:400;"><span style="font-size:15px">本地</span><span style="font-size:16.5px"> Windows </span><span style="font-size:15px">调试器</span></div>
<div class="t" style="left:30.5px;top:106px;font-size:14.8px;color:#f1f1f1;transform-origin:0 0;transform:rotate(90deg);line-height:15px;white-space:nowrap">服务器资源管理器</div>
<div class="t" style="left:30.5px;top:240px;font-size:14.8px;color:#f1f1f1;transform-origin:0 0;transform:rotate(90deg);line-height:15px;white-space:nowrap">工具箱</div>
<div class="t" style="left:48.5px;top:118.28px;font-size:16.5px;color:#f1f1f1;font-weight:400;"><span style="font-size:16.5px">dllmain.cpp</span></div>
<div class="t" style="left:889.7px;top:117.88px;font-size:16.5px;color:#f1f1f1;font-weight:400;"><span style="font-size:16.5px">pch.h</span></div>
<div class="t" style="left:69.8px;top:145.38px;font-size:16.5px;color:#f1f1f1;font-weight:400;"><span style="font-size:16.5px">Dll2</span></div>
<div class="t" style="left:390.4px;top:145.63px;font-size:15.5px;color:#f1f1f1;font-weight:400;"><span style="font-size:15.5px">(</span><span style="font-size:15px">全局范围</span><span style="font-size:15.5px">)</span></div>
<div class="t" style="left:47px;top:783.20px;font-size:15px;color:#f1f1f1;font-weight:400;"><span style="font-size:14.8px">100 %</span></div>
<div class="t" style="left:0;width:119px;text-align:right;top:172.10px;font-size:20.5px;color:#2b91af">1</div>
<div class="t" style="left:189.3px;top:172.10px;font-size:20.5px;color:#57a64a;transform:scaleX(0.9535);transform-origin:0 0">pch.h:</div>
<div class="t" style="left:250.6px;top:174.10px;font-size:19px;color:#57a64a">这是预编译标头文件。</div>
<div class="t" style="left:0;width:119px;text-align:right;top:198.30px;font-size:20.5px;color:#2b91af">2</div>
<div class="t" style="left:189.2px;top:200.30px;font-size:19px;color:#57a64a">下方列出的文件仅编译一次，提高了将来生成的生成性能。</div>
<div class="t" style="left:0;width:119px;text-align:right;top:224.50px;font-size:20.5px;color:#2b91af">3</div>
<div class="t" style="left:189.2px;top:226.50px;font-size:19px;color:#57a64a">这还将影响</div>
<div class="t" style="left:290.7px;top:224.50px;font-size:20.5px;color:#57a64a;transform:scaleX(0.9717);transform-origin:0 0">IntelliSense</div>
<div class="t" style="left:402.0px;top:226.50px;font-size:19px;color:#57a64a">性能，包括代码完成和许多代码浏览功能。</div>
<div class="t" style="left:0;width:119px;text-align:right;top:250.70px;font-size:20.5px;color:#2b91af">4</div>
<div class="t" style="left:189.2px;top:252.70px;font-size:19px;color:#57a64a">但是，如果此处列出的文件中的任何一个在生成之间有更新，它们全部都将被重新编译。</div>
<div class="t" style="left:0;width:119px;text-align:right;top:276.90px;font-size:20.5px;color:#2b91af">5</div>
<div class="t" style="left:189.2px;top:278.90px;font-size:19px;color:#57a64a">请勿在此处添加要频繁更新的文件，这将使得性能优势无效。</div>
<div class="t" style="left:0;width:119px;text-align:right;top:303.10px;font-size:20.5px;color:#2b91af">6</div>
<div class="t" style="left:0;width:119px;text-align:right;top:329.30px;font-size:20.5px;color:#2b91af">7</div>
<div class="t" style="left:166.3px;top:329.30px;font-size:20.5px;color:#9b9b9b;transform:scaleX(1.0682);transform-origin:0 0">#ifndef</div>
<div class="t" style="left:239.60000000000002px;top:329.30px;font-size:20.5px;color:#dcdcdc;transform:scaleX(0.8691);transform-origin:0 0">PCH_H</div>
<div class="t" style="left:0;width:119px;text-align:right;top:355.50px;font-size:20.5px;color:#2b91af">8</div>
<div class="t" style="left:166.3px;top:355.50px;font-size:20.5px;color:#9b9b9b;transform:scaleX(1.0253);transform-origin:0 0">#define</div>
<div class="t" style="left:243.4px;top:355.50px;font-size:20.5px;color:#bd63c5;transform:scaleX(0.8763);transform-origin:0 0">PCH_H</div>
<div class="t" style="left:0;width:119px;text-align:right;top:381.70px;font-size:20.5px;color:#2b91af">9</div>
<div class="t" style="left:0;width:119px;text-align:right;top:407.90px;font-size:20.5px;color:#2b91af">10</div>
<div class="t" style="left:189.2px;top:409.90px;font-size:19px;color:#57a64a">添加要在此处预编译的标头</div>
<div class="t" style="left:0;width:119px;text-align:right;top:434.10px;font-size:20.5px;color:#2b91af">11</div>
<div class="t" style="left:166.60000000000002px;top:434.10px;font-size:20.5px;color:#9b9b9b;transform:scaleX(1.0079);transform-origin:0 0">#include</div>
<div class="t" style="left:252.5px;top:434.10px;font-size:20.5px;color:#d69d85;transform:scaleX(1.0094);transform-origin:0 0">&quot;framework.h&quot;</div>
<div class="t" style="left:0;width:119px;text-align:right;top:460.30px;font-size:20.5px;color:#2b91af">12</div>
<div class="t" style="left:0;width:119px;text-align:right;top:486.50px;font-size:20.5px;color:#2b91af">13</div>
<div class="t" style="left:166.60000000000002px;top:486.50px;font-size:20.5px;color:#9b9b9b;transform:scaleX(1.0304);transform-origin:0 0">#endif</div>
<div class="t" style="left:248.5px;top:486.50px;font-size:20.5px;color:#57a64a;transform:scaleX(0.8719);transform-origin:0 0">PCH_H</div>
<div class="t" style="left:0;width:119px;text-align:right;top:512.70px;font-size:20.5px;color:#2b91af">14</div>
<div class="t" style="left:47px;top:815.58px;font-size:16.5px;color:#f1f1f1;font-weight:400;"><span style="font-size:15px">输出</span></div>
<div class="t" style="left:51.6px;top:847.43px;font-size:15.5px;color:#f1f1f1;font-weight:400;"><span style="font-size:15px">显示输出来源</span><span style="font-size:15.5px">(S):</span></div>
<div class="t" style="left:1017px;top:119.08px;font-size:16.5px;color:#ffffff;font-weight:400;"><span style="font-size:15px">解决方案资源管理器</span></div>
<div class="t" style="left:1019px;top:181.46px;font-size:16px;color:#999999;font-weight:400;"><span style="font-size:15px">搜索解决方案资源管理器</span><span style="font-size:16px">(Ctrl+;)</span></div>
<div class="t" style="left:1054.2px;top:210.78px;font-size:16.5px;color:#f1f1f1;font-weight:400;"><span style="font-size:15px">解决方案</span><span style="font-size:16.5px">“Dll2”(1 </span><span style="font-size:15px">个项目</span><span style="font-size:16.5px">)</span></div>
<div class="t" style="left:1077.6px;top:234.09px;font-size:15.6px;color:#f1f1f1;font-weight:700;"><span style="font-size:15.6px">Dll2</span></div>
<div class="t" style="left:1099.4px;top:256.78px;font-size:16.5px;color:#f1f1f1;font-weight:400;"><span style="font-size:15px">引用</span></div>
<div class="t" style="left:1099.4px;top:279.78px;font-size:16.5px;color:#f1f1f1;font-weight:400;"><span style="font-size:15px">外部依赖项</span></div>
<div class="t" style="left:1099px;top:302.78px;font-size:16.5px;color:#f1f1f1;font-weight:400;"><span style="font-size:15px">头文件</span></div>
<div class="t" style="left:1122.9px;top:325.78px;font-size:16.5px;color:#f1f1f1;font-weight:400;"><span style="font-size:16.5px">framework.h</span></div>
<div class="t" style="left:1122.9px;top:348.78px;font-size:16.5px;color:#f1f1f1;font-weight:400;"><span style="font-size:16.5px">pch.h</span></div>
<div class="t" style="left:1099px;top:371.78px;font-size:16.5px;color:#f1f1f1;font-weight:400;"><span style="font-size:15px">源文件</span></div>
<div class="t" style="left:1122.9px;top:394.78px;font-size:16.5px;color:#f1f1f1;font-weight:400;"><span style="font-size:16.5px">dllmain.cpp</span></div>
<div class="t" style="left:1122.9px;top:417.78px;font-size:16.5px;color:#f1f1f1;font-weight:400;"><span style="font-size:16.5px">pch.cpp</span></div>
<div class="t" style="left:1099px;top:440.78px;font-size:16.5px;color:#f1f1f1;font-weight:400;"><span style="font-size:15px">资源文件</span></div>
<div class="t" style="left:1019px;top:631.28px;font-size:16.5px;color:#0097fb;font-weight:400;"><span style="font-size:15px">解决方案资源管理器</span></div>
<div class="t" style="left:1168.5px;top:631.28px;font-size:16.5px;color:#f1f1f1;font-weight:400;"><span style="font-size:15px">团队资源管理器</span></div>
<div class="t" style="left:1287px;top:631.28px;font-size:16.5px;color:#f1f1f1;font-weight:400;"><span style="font-size:15px">属性管理器</span></div>
<div class="t" style="left:1017.2px;top:665.88px;font-size:16.5px;color:#f1f1f1;font-weight:400;"><span style="font-size:15px">属性</span></div>
<div class="t" style="left:1019.6px;top:694.19px;font-size:15.6px;color:#f1f1f1;font-weight:700;"><span style="font-size:15.6px">pch.h</span></div>
<div class="t" style="left:1066.8px;top:694.28px;font-size:16.5px;color:#f1f1f1;font-weight:400;"><span style="font-size:15px">文件属性</span></div>
<div class="t" style="left:1035px;top:750.78px;font-size:16.5px;color:#f1f1f1;font-weight:700;"><span style="font-size:15px">杂项</span></div>
<div class="t" style="left:1035px;top:774.76px;font-size:16px;color:#f1f1f1;font-weight:400;"><span style="font-size:16px">(</span><span style="font-size:15px">名称</span><span style="font-size:16px">)</span></div>
<div class="t" style="left:1225.6px;top:774.76px;font-size:16px;color:#f1f1f1;font-weight:400;"><span style="font-size:16px">pch.h</span></div>
<div class="t" style="left:1035px;top:797.76px;font-size:16px;color:#f1f1f1;font-weight:400;"><span style="font-size:15px">包括在项目中</span></div>
<div class="t" style="left:1225.6px;top:797.76px;font-size:16px;color:#f1f1f1;font-weight:400;"><span style="font-size:16px">True</span></div>
<div class="t" style="left:1035px;top:820.76px;font-size:16px;color:#f1f1f1;font-weight:400;"><span style="font-size:15px">内容</span></div>
<div class="t" style="left:1225.6px;top:820.76px;font-size:16px;color:#f1f1f1;font-weight:400;"><span style="font-size:16px">False</span></div>
<div class="t" style="left:1035px;top:843.76px;font-size:16px;color:#999999;font-weight:400;"><span style="font-size:15px">完整路径</span></div>
<div class="t" style="left:1225.6px;top:843.76px;font-size:16px;color:#999999;font-weight:400;"><span style="font-size:16px">F:\1\Dll2\Dll2\pch.h</span></div>
<div class="t" style="left:1035px;top:866.76px;font-size:16px;color:#f1f1f1;font-weight:400;"><span style="font-size:15px">文件类型</span></div>
<div class="t" style="left:1225.6px;top:866.76px;font-size:16px;color:#f1f1f1;font-weight:400;"><span style="font-size:16px">C++ </span><span style="font-size:15px">头文件</span></div>
<div class="t" style="left:1035px;top:889.76px;font-size:16px;color:#f1f1f1;font-weight:400;"><span style="font-size:15px">相对路径</span></div>
<div class="t" style="left:1225.6px;top:889.76px;font-size:16px;color:#f1f1f1;font-weight:400;"><span style="font-size:16px">pch.h</span></div>
<div class="t" style="left:1471px;top:106px;font-size:14.5px;color:#f1f1f1;transform-origin:0 0;transform:rotate(90deg);line-height:15px;white-space:nowrap">通知</div>
</body></html>
